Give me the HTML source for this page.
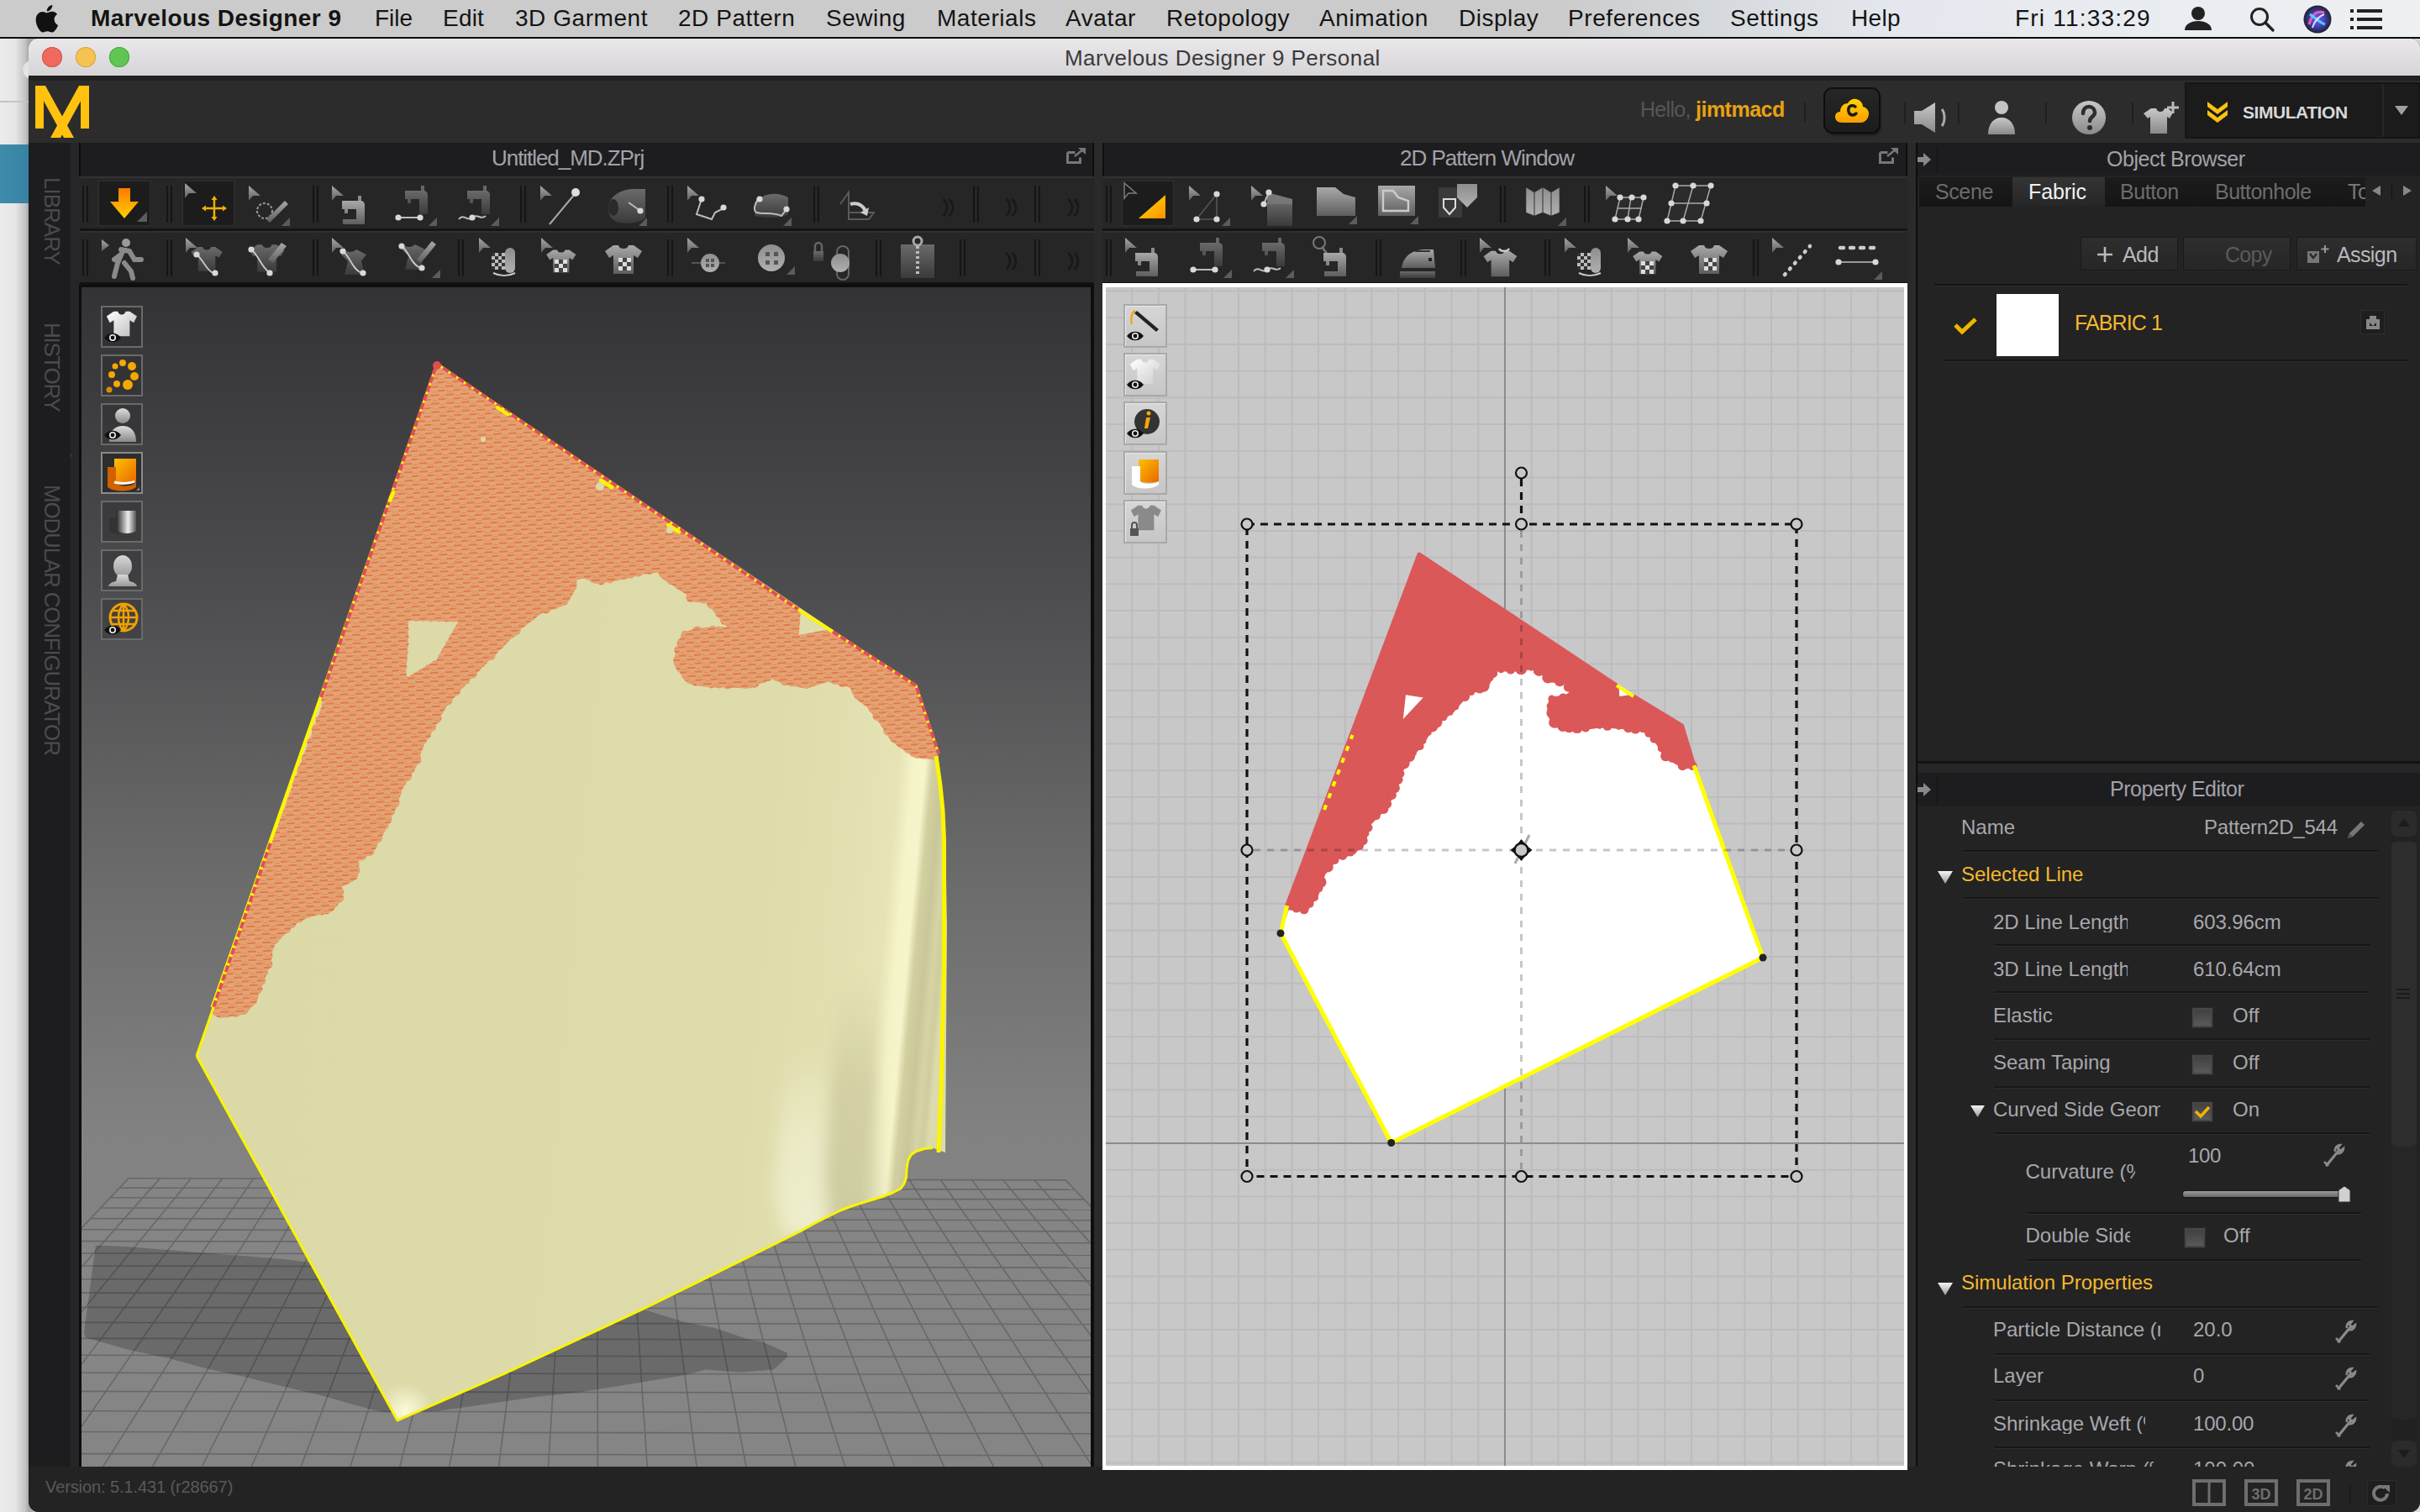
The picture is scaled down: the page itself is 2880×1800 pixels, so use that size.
<!DOCTYPE html>
<html><head><meta charset="utf-8">
<style>
*{box-sizing:border-box;margin:0;padding:0}
html,body{width:2880px;height:1800px;overflow:hidden}
body{position:relative;background:#d8d8d8;font-family:"Liberation Sans",sans-serif}
.a{position:absolute}
.t{position:absolute;white-space:nowrap;line-height:1}
svg{position:absolute;overflow:visible}
</style></head><body>

<div class="a" style="left:0px;top:46px;width:40px;height:1754px;background:linear-gradient(90deg,#ececec 0,#e6e6e6 18px,#c4c4c4 30px,#a8a8a8 34px);"></div>
<div class="a" style="left:0px;top:172px;width:34px;height:70px;background:linear-gradient(90deg,#3d8cab,#3782a2);"></div>
<div class="a" style="left:0px;top:120px;width:34px;height:2px;background:#c4c4c4;"></div>
<div class="a" style="left:26px;top:72px;width:22px;height:22px;border-radius:50%;border:1px solid #c8c8c8;background:#e4e4e4"></div>
<div class="a" style="left:0px;top:0px;width:2880px;height:44px;background:linear-gradient(90deg,#cbcbcb 0,#cbcbcb 1850px,#d6dade 2050px,#e4e8ee 2250px,#eef0f3 2880px);"></div>
<div class="a" style="left:0px;top:44px;width:2880px;height:2px;background:#0c0c0c;"></div>
<svg style="left:40px;top:5px" width="30" height="34" viewBox="0 0 30 34">
<path d="M24.6 18.1c0-4.1 3.4-6 3.5-6.1-1.9-2.8-4.9-3.2-5.9-3.2-2.5-.3-4.9 1.5-6.2 1.5-1.3 0-3.2-1.4-5.3-1.4C8 8.9 5.4 10.5 4 13c-2.9 5-.7 12.4 2.1 16.4 1.4 2 3 4.2 5.1 4.1 2.1-.1 2.8-1.3 5.3-1.3s3.1 1.3 5.3 1.3c2.2 0 3.6-2 5-4 1.6-2.3 2.2-4.5 2.2-4.6-.1 0-4.3-1.7-4.4-6.8zM20.6 6.1c1.1-1.4 1.9-3.3 1.7-5.1-1.6.1-3.6 1.1-4.8 2.5-1 1.2-2 3.1-1.7 5 1.8.1 3.7-1 4.8-2.4z" fill="#111"/></svg>
<div class="t" style="left:108.0px;top:8.2px;font-size:28px;color:#141414;font-weight:700;letter-spacing:0.45px;">Marvelous Designer 9</div>
<div class="t" style="left:446.0px;top:8.2px;font-size:28px;color:#141414;">File</div>
<div class="t" style="left:527.0px;top:8.2px;font-size:28px;color:#141414;letter-spacing:0.2px;">Edit</div>
<div class="t" style="left:613.0px;top:8.2px;font-size:28px;color:#141414;letter-spacing:0.55px;">3D Garment</div>
<div class="t" style="left:807.0px;top:8.2px;font-size:28px;color:#141414;letter-spacing:0.55px;">2D Pattern</div>
<div class="t" style="left:983.0px;top:8.2px;font-size:28px;color:#141414;letter-spacing:0.5px;">Sewing</div>
<div class="t" style="left:1115.0px;top:8.2px;font-size:28px;color:#141414;letter-spacing:0.55px;">Materials</div>
<div class="t" style="left:1268.0px;top:8.2px;font-size:28px;color:#141414;letter-spacing:0.6px;">Avatar</div>
<div class="t" style="left:1388.0px;top:8.2px;font-size:28px;color:#141414;letter-spacing:0.55px;">Retopology</div>
<div class="t" style="left:1570.0px;top:8.2px;font-size:28px;color:#141414;letter-spacing:0.6px;">Animation</div>
<div class="t" style="left:1736.0px;top:8.2px;font-size:28px;color:#141414;letter-spacing:0.5px;">Display</div>
<div class="t" style="left:1866.0px;top:8.2px;font-size:28px;color:#141414;letter-spacing:0.6px;">Preferences</div>
<div class="t" style="left:2059.0px;top:8.2px;font-size:28px;color:#141414;letter-spacing:0.55px;">Settings</div>
<div class="t" style="left:2203.0px;top:8.2px;font-size:28px;color:#141414;letter-spacing:0.3px;">Help</div>
<div class="t" style="left:2398.0px;top:8.2px;font-size:28px;color:#141414;letter-spacing:1.2px;">Fri 11:33:29</div>
<svg style="left:2598px;top:6px" width="40" height="32" viewBox="0 0 40 32">
<circle cx="18" cy="10" r="8" fill="#222"/><path d="M2 30c0-7 7-11 16-11s16 4 16 11z" fill="#222"/></svg>
<svg style="left:2676px;top:8px" width="34" height="32" viewBox="0 0 34 32">
<circle cx="13" cy="12" r="9.5" fill="none" stroke="#222" stroke-width="3"/><path d="M20 19l9 9" stroke="#222" stroke-width="3.4" stroke-linecap="round"/></svg>
<svg style="left:2740px;top:5px" width="36" height="36" viewBox="0 0 36 36">
<defs><radialGradient id="siri" cx="50%" cy="50%" r="50%"><stop offset="0" stop-color="#7a5cff"/><stop offset=".6" stop-color="#3b3ba8"/><stop offset=".85" stop-color="#2a2a5a"/><stop offset="1" stop-color="#222"/></radialGradient></defs>
<circle cx="18" cy="18" r="16.5" fill="url(#siri)"/>
<path d="M8 24C12 10 18 8 26 10" stroke="#ff5fb0" stroke-width="3" fill="none" opacity=".9"/>
<path d="M9 12c6 4 12 10 18 12" stroke="#4fd8ff" stroke-width="3" fill="none" opacity=".9"/>
<path d="M12 28c2-8 8-14 14-16" stroke="#ffffff" stroke-width="2" fill="none" opacity=".8"/></svg>
<svg style="left:2797px;top:10px" width="40" height="26" viewBox="0 0 40 26">
<g fill="#222"><rect x="0" y="1" width="4" height="4"/><rect x="8" y="1" width="30" height="4"/><rect x="0" y="11" width="4" height="4"/><rect x="8" y="11" width="30" height="4"/><rect x="0" y="21" width="4" height="4"/><rect x="8" y="21" width="30" height="4"/></g></svg>
<div class="a" style="left:34px;top:46px;width:2846px;height:1754px;background:#232323;border-radius:11px 11px 12px 12px;overflow:hidden">
<div class="a" style="left:0;top:0;width:2846px;height:44px;background:linear-gradient(#eae8eb,#d6d4d7)"></div>
</div>
<div class="a" style="left:50px;top:56px;width:24px;height:24px;border-radius:50%;background:#ee6a5f;box-shadow:inset 0 0 0 1px #d65548"></div>
<div class="a" style="left:90px;top:56px;width:24px;height:24px;border-radius:50%;background:#f6c251;box-shadow:inset 0 0 0 1px #dca23d"></div>
<div class="a" style="left:130px;top:56px;width:24px;height:24px;border-radius:50%;background:#61c554;box-shadow:inset 0 0 0 1px #4aa83e"></div>
<div class="t" style="left:1267.0px;top:55.9px;font-size:26px;color:#3a3a3a;letter-spacing:0.45px;">Marvelous Designer 9 Personal</div>
<div class="a" style="left:34px;top:90px;width:2846px;height:6px;background:#212121;"></div>
<div class="a" style="left:34px;top:96px;width:2846px;height:74px;background:#2c2c2c;"></div>
<svg style="left:0;top:0" width="120" height="170" viewBox="0 0 120 170">
<g fill="#ffc20e"><rect x="42" y="102" width="10" height="51"/><rect x="96" y="102" width="10" height="51"/>
<polygon points="42,102 54,102 88,164 76,164"/><polygon points="94,102 106,102 72,164 60,164"/></g></svg>
<div class="t" style="left:1952.0px;top:117.8px;font-size:25px;color:#55565a;letter-spacing:-0.7px;">Hello,</div>
<div class="t" style="left:2018.0px;top:117.8px;font-size:25px;color:#e9a112;font-weight:700;letter-spacing:-0.5px;">jimtmacd</div>
<div class="a" style="left:2147px;top:122px;width:2px;height:23px;background:#1e1e1e;"></div>
<div class="a" style="left:2172px;top:106px;width:64px;height:51px;border-radius:9px;background:linear-gradient(#262626,#1c1c1c);box-shadow:0 0 0 2px #0d0d0d, 2px 4px 3px rgba(0,0,0,.5)"></div>
<svg style="left:2183px;top:114px" width="42" height="34" viewBox="0 0 42 34">
<defs><linearGradient id="cg" x1="0" y1="0" x2="0" y2="1"><stop offset="0" stop-color="#ffd400"/><stop offset="1" stop-color="#ff9c00"/></linearGradient></defs>
<path d="M9 32c-5 0-8-3-8-7 0-4 3-6 6-6 0-6 4-10 9-10 2-4 6-6 10-5 5 1 8 5 8 9 4 1 7 4 7 8 0 6-4 11-10 11z" fill="url(#cg)"/>
<path d="M25 13c-2-2-7-2-8 2s1 8 5 8c2 0 3-1 4-2" fill="none" stroke="#1a1a1a" stroke-width="3.5" stroke-linecap="round"/></svg>
<div class="a" style="left:2266px;top:122px;width:2px;height:25px;background:#1f1f1f;"></div>
<div class="a" style="left:2330px;top:122px;width:2px;height:25px;background:#1f1f1f;"></div>
<div class="a" style="left:2434px;top:122px;width:2px;height:25px;background:#1f1f1f;"></div>
<div class="a" style="left:2537px;top:122px;width:2px;height:25px;background:#1f1f1f;"></div>
<svg style="left:2277px;top:120px" width="44" height="40" viewBox="0 0 44 40">
<defs><linearGradient id="gg" x1="0" y1="0" x2="0" y2="1"><stop offset="0" stop-color="#c8c8c8"/><stop offset="1" stop-color="#8a8a8a"/></linearGradient></defs>
<path d="M1 12h9l16-10v36L10 28H1z" fill="url(#gg)"/><path d="M34 10c4 5 4 15 0 20" stroke="#aaa" stroke-width="3" fill="none"/></svg>
<svg style="left:2365px;top:119px" width="34" height="42" viewBox="0 0 34 42">
<circle cx="17" cy="9" r="8" fill="#c4c4c4"/><path d="M1 41c0-12 6-20 16-20s16 8 16 20z" fill="url(#gg)"/></svg>
<svg style="left:2465px;top:119px" width="42" height="42" viewBox="0 0 42 42">
<circle cx="21" cy="21" r="20" fill="url(#gg)"/><path d="M14 16c0-5 3-8 7-8s7 3 7 7c0 5-6 5-6 10" stroke="#2c2c2c" stroke-width="4.5" fill="none" stroke-linecap="round"/><circle cx="22" cy="33" r="3" fill="#2c2c2c"/></svg>
<svg style="left:2549px;top:121px" width="44" height="40" viewBox="0 0 44 40">
<path d="M2 14l9-6h6c1 3 3 4 5 4s4-1 5-4h4l6 5-4 7-3-2v20H10V18l-3 2z" fill="url(#gg)"/><path d="M37 0v14M30 7h14" stroke="#bbb" stroke-width="3"/></svg>
<div class="a" style="left:2600px;top:98px;width:280px;height:67px;background:#1b1b1b;box-shadow:inset 0 0 0 2px #151515"></div>
<div class="a" style="left:2835px;top:100px;width:2px;height:63px;background:#262626;"></div>
<svg style="left:2625px;top:119px" width="28" height="28" viewBox="0 0 28 28">
<path d="M2 2l12 9 12-9v6L14 17 2 8zM2 12l12 9 12-9v6L14 27 2 18z" fill="#ffc20e"/></svg>
<div class="t" style="left:2669.0px;top:122.7px;font-size:21px;color:#d8d8d8;font-weight:700;letter-spacing:-0.45px;">SIMULATION</div>
<svg style="left:2850px;top:126px" width="16" height="12" viewBox="0 0 16 12"><path d="M0 0h16L8 11z" fill="#a0a0a0"/></svg>
<div class="a" style="left:34px;top:170px;width:50px;height:1576px;background:#1d1d1f;"></div>
<div class="a" style="left:84px;top:170px;width:11px;height:1576px;background:#262628;"></div>
<div class="t" style="left:52.5px;top:211px;font-size:26px;color:#4b4b4d;letter-spacing:-1.0px;transform-origin:0 0;transform:rotate(90deg) translate(0,-22.1px)">LIBRARY</div>
<div class="t" style="left:52.5px;top:384px;font-size:26px;color:#4b4b4d;letter-spacing:-1.3px;transform-origin:0 0;transform:rotate(90deg) translate(0,-22.1px)">HISTORY</div>
<div class="t" style="left:52.5px;top:577px;font-size:26px;color:#4b4b4d;letter-spacing:-1.2px;transform-origin:0 0;transform:rotate(90deg) translate(0,-22.1px)">MODULAR CONFIGURATOR</div>
<div class="a" style="left:84px;top:540px;width:1px;height:4px;background:#444;"></div>
<div class="a" style="left:95px;top:170px;width:1207px;height:1576px;background:#2a2a2a;"></div>
<div class="a" style="left:95px;top:170px;width:1205px;height:40px;background:#1d1d1f;"></div>
<div class="a" style="left:1300px;top:170px;width:2px;height:40px;background:#0e0e0e;"></div>
<div class="a" style="left:95px;top:210px;width:1205px;height:2px;background:#333335;"></div>
<div class="a" style="left:95px;top:212px;width:1207px;height:60px;background:#262626;"></div>
<div class="a" style="left:95px;top:272px;width:1207px;height:3px;background:#141414;"></div>
<div class="a" style="left:95px;top:275px;width:1207px;height:2px;background:#303030;"></div>
<div class="a" style="left:95px;top:277px;width:1207px;height:59px;background:#262626;"></div>
<div class="a" style="left:95px;top:336px;width:1207px;height:4px;background:#121212;"></div>
<div class="a" style="left:94px;top:338px;width:1208px;height:1408px;background:#0e0e0e;"></div>
<div class="a" style="left:94px;top:170px;width:2px;height:40px;background:#0b0b0b;"></div>
<div class="t" style="left:585.0px;top:174.9px;font-size:26px;color:#a2a2aa;letter-spacing:-1.05px;">Untitled_MD.ZPrj</div>
<svg style="left:1269px;top:175px" width="24" height="20" viewBox="0 0 24 20">
<path d="M1.5 6.5h9M1.5 6.5v12h15v-6" stroke="#777" stroke-width="3" fill="none"/><path d="M10 11l11-9" stroke="#777" stroke-width="2.5"/><path d="M14 1h9v8z" fill="#777"/></svg>
<div class="a" style="left:1302px;top:170px;width:10px;height:1580px;background:#2a2a2a;"></div>
<div class="a" style="left:1312px;top:170px;width:958px;height:40px;background:#1d1d1f;"></div>
<div class="a" style="left:1312px;top:170px;width:2px;height:40px;background:#0e0e0e;"></div>
<div class="a" style="left:1312px;top:210px;width:958px;height:2px;background:#333335;"></div>
<div class="a" style="left:1312px;top:212px;width:958px;height:60px;background:#262626;"></div>
<div class="a" style="left:1312px;top:272px;width:958px;height:3px;background:#141414;"></div>
<div class="a" style="left:1312px;top:275px;width:958px;height:2px;background:#303030;"></div>
<div class="a" style="left:1312px;top:277px;width:958px;height:59px;background:#262626;"></div>
<div class="a" style="left:1312px;top:336px;width:958px;height:2px;background:#121212;"></div>
<div class="t" style="left:1666.0px;top:174.9px;font-size:26px;color:#a2a2aa;letter-spacing:-1.0px;">2D Pattern Window</div>
<svg style="left:2236px;top:175px" width="24" height="20" viewBox="0 0 24 20">
<path d="M1.5 6.5h9M1.5 6.5v12h15v-6" stroke="#777" stroke-width="3" fill="none"/><path d="M10 11l11-9" stroke="#777" stroke-width="2.5"/><path d="M14 1h9v8z" fill="#777"/></svg>
<div class="a" style="left:2270px;top:170px;width:12px;height:1580px;background:#2a2a2a;"></div>
<div class="a" style="left:2268px;top:170px;width:2px;height:40px;background:#0e0e0e;"></div>
<div class="a" style="left:2282px;top:170px;width:598px;height:39px;background:#1d1d1f;"></div>
<svg style="left:2282px;top:182px" width="16" height="16" viewBox="0 0 16 16"><path d="M0 5h7V0l9 8-9 8v-5H0z" fill="#8a8a8a"/></svg>
<div class="a" style="left:2305px;top:174px;width:1px;height:32px;background:#111;"></div>
<div class="t" style="left:2507.0px;top:176.8px;font-size:25px;color:#a2a2aa;letter-spacing:-0.45px;">Object Browser</div>
<div class="a" style="left:2282px;top:209px;width:598px;height:700px;background:#232323;"></div>
<div class="a" style="left:2284px;top:211px;width:590px;height:35px;background:#181818;"></div>
<div class="a" style="left:2284px;top:211px;width:110px;height:35px;background:linear-gradient(#1c1c1c,#151515);"></div>
<div class="a" style="left:2395px;top:211px;width:110px;height:35px;background:linear-gradient(#343434,#262626);"></div>
<div class="a" style="left:2506px;top:211px;width:110px;height:35px;background:linear-gradient(#1c1c1c,#151515);"></div>
<div class="a" style="left:2617px;top:211px;width:157px;height:35px;background:linear-gradient(#1c1c1c,#151515);"></div>
<div class="a" style="left:2775px;top:211px;width:40px;height:35px;background:linear-gradient(#1c1c1c,#151515);"></div>
<div class="t" style="left:2303.0px;top:215.8px;font-size:25px;color:#6c6c70;letter-spacing:-0.4px;">Scene</div>
<div class="t" style="left:2414.0px;top:215.8px;font-size:25px;color:#f2f2f2;letter-spacing:-0.1px;">Fabric</div>
<div class="t" style="left:2523.0px;top:215.8px;font-size:25px;color:#6c6c70;letter-spacing:-0.4px;">Button</div>
<div class="t" style="left:2636.0px;top:215.8px;font-size:25px;color:#6c6c70;letter-spacing:-0.5px;">Buttonhole</div>
<div class="t" style="left:2794.0px;top:215.8px;font-size:25px;color:#77777b;letter-spacing:-0.5px;width:26px;overflow:hidden">To</div>
<div class="a" style="left:2815px;top:211px;width:65px;height:35px;background:#232323;"></div>
<svg style="left:2823px;top:220px" width="50" height="16" viewBox="0 0 50 16"><path d="M0 7l10-6v12z" fill="#888"/><path d="M47 7l-10-6v12z" fill="#888"/><rect x="23" y="0" width="1" height="16" fill="#111"/></svg>
<div class="a" style="left:2476px;top:282px;width:116px;height:40px;background:linear-gradient(#2e2e2e,#262626);box-shadow:inset 0 0 0 1px #1a1a1a"></div>
<div class="a" style="left:2598px;top:282px;width:128px;height:40px;background:linear-gradient(#2e2e2e,#262626);box-shadow:inset 0 0 0 1px #1a1a1a"></div>
<div class="a" style="left:2733px;top:282px;width:143px;height:40px;background:linear-gradient(#2e2e2e,#262626);box-shadow:inset 0 0 0 1px #1a1a1a"></div>
<svg style="left:2495px;top:293px" width="20" height="20" viewBox="0 0 20 20"><path d="M10 1v18M1 10h18" stroke="#b8b8b8" stroke-width="2.6"/></svg>
<div class="t" style="left:2526.0px;top:290.8px;font-size:25px;color:#b8b8bc;letter-spacing:-0.6px;">Add</div>
<div class="t" style="left:2648.0px;top:290.8px;font-size:25px;color:#5a5a5e;letter-spacing:-0.7px;">Copy</div>
<svg style="left:2745px;top:290px" width="28" height="26" viewBox="0 0 28 26"><rect x="1" y="9" width="14" height="14" fill="#777"/><path d="M4 12l4 5 4-5" stroke="#2a2a2a" stroke-width="2.5" fill="none"/><path d="M22 2v9M17.5 6.5h9" stroke="#999" stroke-width="2"/></svg>
<div class="t" style="left:2781.0px;top:290.8px;font-size:25px;color:#b8b8bc;letter-spacing:-0.6px;">Assign</div>
<div class="a" style="left:2302px;top:338px;width:563px;height:2px;background:#151515;"></div>
<div class="a" style="left:2302px;top:340px;width:563px;height:1px;background:#2e2e2e;"></div>
<svg style="left:2325px;top:377px" width="28" height="22" viewBox="0 0 28 22"><path d="M2 10l8 8L26 3" stroke="#f0b400" stroke-width="5" fill="none"/></svg>
<div class="a" style="left:2376px;top:350px;width:74px;height:74px;background:#ffffff;"></div>
<div class="t" style="left:2469.0px;top:371.8px;font-size:25px;color:#f5b82e;letter-spacing:-0.9px;">FABRIC 1</div>
<div class="a" style="left:2809px;top:369px;width:29px;height:29px;background:#1e1e1e;box-shadow:inset 0 0 0 1px #2e2e2e"></div>
<svg style="left:2814px;top:374px" width="20" height="20" viewBox="0 0 20 20"><path d="M2 6h4v8h8V6h4v12H2z" fill="#888"/><path d="M6 2h8v5h3l-7 7-7-7h3z" fill="#888"/></svg>
<div class="a" style="left:2312px;top:428px;width:553px;height:2px;background:#161616;"></div>
<div class="a" style="left:2312px;top:430px;width:553px;height:1px;background:#2c2c2c;"></div>
<div class="a" style="left:2282px;top:906px;width:598px;height:3px;background:#121212;"></div>
<div class="a" style="left:2282px;top:909px;width:598px;height:11px;background:#262626;"></div>
<div class="a" style="left:2282px;top:920px;width:598px;height:40px;background:#1d1d1f;"></div>
<svg style="left:2282px;top:932px" width="16" height="16" viewBox="0 0 16 16"><path d="M0 5h7V0l9 8-9 8v-5H0z" fill="#8a8a8a"/></svg>
<div class="a" style="left:2305px;top:925px;width:1px;height:32px;background:#111;"></div>
<div class="t" style="left:2511.0px;top:926.8px;font-size:25px;color:#a2a2aa;letter-spacing:-0.5px;">Property Editor</div>
<div class="a" style="left:2282px;top:960px;width:598px;height:789px;background:#232323;"></div>
<div class="a" style="left:2280px;top:170px;width:2px;height:1579px;background:#0e0e0e;"></div>
<div class="t" style="left:2334px;top:972.6px;font-size:24px;color:#a7a7ad;width:120px;overflow:hidden;letter-spacing:0px">Name</div>
<div class="t" style="left:2623.0px;top:972.6px;font-size:24px;color:#a7a7ad;letter-spacing:-0.2px;">Pattern2D_544</div>
<svg style="left:2791px;top:975px" width="26" height="26" viewBox="0 0 26 26"><path d="M3 23l2-6L19 3l4 4L9 21z" fill="#777"/><path d="M3 23l2-6 4 4z" fill="#555"/></svg>
<div class="a" style="left:2336px;top:1012px;width:494px;height:2px;background:#161616;"></div>
<div class="a" style="left:2336px;top:1014px;width:494px;height:1px;background:#2d2d2d;"></div>
<svg style="left:2306px;top:1036px" width="18" height="16" viewBox="0 0 18 16"><defs><linearGradient id="tg" x1="0" y1="0" x2="0" y2="1"><stop offset="0" stop-color="#f4f4f4"/><stop offset="1" stop-color="#9a9a9a"/></linearGradient></defs><path d="M0 1h18L9 16z" fill="url(#tg)"/></svg>
<div class="t" style="left:2334.0px;top:1028.6px;font-size:24px;color:#f5b82e;">Selected Line</div>
<div class="a" style="left:2336px;top:1068px;width:494px;height:2px;background:#161616;"></div>
<div class="a" style="left:2336px;top:1070px;width:494px;height:1px;background:#2d2d2d;"></div>
<div class="t" style="left:2372px;top:1085.6px;font-size:24px;color:#a7a7ad;width:160px;overflow:hidden;letter-spacing:0px">2D Line Length</div>
<div class="t" style="left:2610.0px;top:1085.6px;font-size:24px;color:#a7a7ad;letter-spacing:-0.1px;">603.96cm</div>
<div class="a" style="left:2374px;top:1124px;width:446px;height:2px;background:#161616;"></div>
<div class="a" style="left:2374px;top:1126px;width:446px;height:1px;background:#2d2d2d;"></div>
<div class="t" style="left:2372px;top:1141.6px;font-size:24px;color:#a7a7ad;width:160px;overflow:hidden;letter-spacing:0px">3D Line Length</div>
<div class="t" style="left:2610.0px;top:1141.6px;font-size:24px;color:#a7a7ad;letter-spacing:-0.1px;">610.64cm</div>
<div class="a" style="left:2374px;top:1180px;width:446px;height:2px;background:#161616;"></div>
<div class="a" style="left:2374px;top:1182px;width:446px;height:1px;background:#2d2d2d;"></div>
<div class="t" style="left:2372px;top:1196.6px;font-size:24px;color:#a7a7ad;width:190px;overflow:hidden;letter-spacing:0px">Elastic</div>
<div class="a" style="left:2609px;top:1200px;width:24px;height:23px;background:linear-gradient(#3e3e3e,#5c5c5c);box-shadow:inset 0 0 0 2px #474747, 0 0 0 1px #2a2a2a"></div>
<div class="t" style="left:2657.0px;top:1196.6px;font-size:24px;color:#a7a7ad;">Off</div>
<div class="a" style="left:2374px;top:1236px;width:446px;height:2px;background:#161616;"></div>
<div class="a" style="left:2374px;top:1238px;width:446px;height:1px;background:#2d2d2d;"></div>
<div class="t" style="left:2372px;top:1252.6px;font-size:24px;color:#a7a7ad;width:190px;overflow:hidden;letter-spacing:0px">Seam Taping</div>
<div class="a" style="left:2609px;top:1256px;width:24px;height:23px;background:linear-gradient(#3e3e3e,#5c5c5c);box-shadow:inset 0 0 0 2px #474747, 0 0 0 1px #2a2a2a"></div>
<div class="t" style="left:2657.0px;top:1252.6px;font-size:24px;color:#a7a7ad;">Off</div>
<div class="a" style="left:2374px;top:1293px;width:446px;height:2px;background:#161616;"></div>
<div class="a" style="left:2374px;top:1295px;width:446px;height:1px;background:#2d2d2d;"></div>
<svg style="left:2345px;top:1315px" width="17" height="15" viewBox="0 0 18 16"><defs><linearGradient id="tg" x1="0" y1="0" x2="0" y2="1"><stop offset="0" stop-color="#f4f4f4"/><stop offset="1" stop-color="#9a9a9a"/></linearGradient></defs><path d="M0 1h18L9 16z" fill="url(#tg)"/></svg>
<div class="t" style="left:2372px;top:1308.6px;font-size:24px;color:#a7a7ad;width:199px;overflow:hidden;letter-spacing:0px">Curved Side Geometry</div>
<div class="a" style="left:2609px;top:1312px;width:24px;height:23px;background:linear-gradient(#3e3e3e,#5c5c5c);box-shadow:inset 0 0 0 2px #474747, 0 0 0 1px #2a2a2a"></div>
<svg style="left:2611px;top:1316px" width="20" height="16" viewBox="0 0 20 16"><path d="M2 7l6 6L18 2" stroke="#f0b400" stroke-width="3.6" fill="none"/></svg>
<div class="t" style="left:2657.0px;top:1308.6px;font-size:24px;color:#a7a7ad;">On</div>
<div class="a" style="left:2374px;top:1348px;width:446px;height:2px;background:#161616;"></div>
<div class="a" style="left:2374px;top:1350px;width:446px;height:1px;background:#2d2d2d;"></div>
<div class="t" style="left:2410.5px;top:1382.6px;font-size:24px;color:#a7a7ad;width:130px;overflow:hidden;letter-spacing:0px">Curvature (%)</div>
<div class="t" style="left:2604.0px;top:1363.6px;font-size:24px;color:#a7a7ad;letter-spacing:-0.4px;">100</div>
<svg style="left:2765px;top:1361px" width="28" height="28" viewBox="0 0 28 28"><path d="M4 26L18 9" stroke="#8a8a8a" stroke-width="3.2" stroke-linecap="round"/><path d="M14 10c-1-4 2-8 6-8l-3 4 3 3 4-3c0 4-4 7-8 6" fill="none" stroke="#8a8a8a" stroke-width="2.6"/><path d="M1 22l5 5" stroke="#8a8a8a" stroke-width="2.6"/></svg>
<div class="a" style="left:2598px;top:1418px;width:190px;height:7px;background:linear-gradient(#9a9a9a,#6a6a6a);border-radius:3px;box-shadow:0 0 0 1px #1a1a1a"></div>
<svg style="left:2782px;top:1411px" width="16" height="21" viewBox="0 0 16 21"><path d="M1 6l7-5 7 5v14H1z" fill="#d0d0d0" stroke="#333" stroke-width="1"/></svg>
<div class="a" style="left:2412px;top:1443px;width:398px;height:2px;background:#161616;"></div>
<div class="a" style="left:2412px;top:1445px;width:398px;height:1px;background:#2d2d2d;"></div>
<div class="t" style="left:2410.5px;top:1458.6px;font-size:24px;color:#a7a7ad;width:124px;overflow:hidden;letter-spacing:0px">Double Side</div>
<div class="a" style="left:2600px;top:1462px;width:24px;height:23px;background:linear-gradient(#3e3e3e,#5c5c5c);box-shadow:inset 0 0 0 2px #474747, 0 0 0 1px #2a2a2a"></div>
<div class="t" style="left:2646.0px;top:1458.6px;font-size:24px;color:#a7a7ad;">Off</div>
<div class="a" style="left:2412px;top:1499px;width:398px;height:2px;background:#161616;"></div>
<div class="a" style="left:2412px;top:1501px;width:398px;height:1px;background:#2d2d2d;"></div>
<svg style="left:2306px;top:1526px" width="18" height="16" viewBox="0 0 18 16"><defs><linearGradient id="tg" x1="0" y1="0" x2="0" y2="1"><stop offset="0" stop-color="#f4f4f4"/><stop offset="1" stop-color="#9a9a9a"/></linearGradient></defs><path d="M0 1h18L9 16z" fill="url(#tg)"/></svg>
<div class="t" style="left:2334.0px;top:1514.6px;font-size:24px;color:#f5b82e;">Simulation Properties</div>
<div class="a" style="left:2336px;top:1555px;width:494px;height:2px;background:#161616;"></div>
<div class="a" style="left:2336px;top:1557px;width:494px;height:1px;background:#2d2d2d;"></div>
<div class="t" style="left:2372px;top:1570.6px;font-size:24px;color:#a7a7ad;width:199px;overflow:hidden;letter-spacing:0px">Particle Distance (mm)</div>
<div class="t" style="left:2610.0px;top:1570.6px;font-size:24px;color:#a7a7ad;">20.0</div>
<svg style="left:2779px;top:1571px" width="28" height="28" viewBox="0 0 28 28"><path d="M4 26L18 9" stroke="#8a8a8a" stroke-width="3.2" stroke-linecap="round"/><path d="M14 10c-1-4 2-8 6-8l-3 4 3 3 4-3c0 4-4 7-8 6" fill="none" stroke="#8a8a8a" stroke-width="2.6"/><path d="M1 22l5 5" stroke="#8a8a8a" stroke-width="2.6"/></svg>
<div class="a" style="left:2374px;top:1611px;width:446px;height:2px;background:#161616;"></div>
<div class="a" style="left:2374px;top:1613px;width:446px;height:1px;background:#2d2d2d;"></div>
<div class="t" style="left:2372px;top:1625.6px;font-size:24px;color:#a7a7ad;width:190px;overflow:hidden;letter-spacing:0px">Layer</div>
<div class="t" style="left:2610.0px;top:1625.6px;font-size:24px;color:#a7a7ad;">0</div>
<svg style="left:2779px;top:1627px" width="28" height="28" viewBox="0 0 28 28"><path d="M4 26L18 9" stroke="#8a8a8a" stroke-width="3.2" stroke-linecap="round"/><path d="M14 10c-1-4 2-8 6-8l-3 4 3 3 4-3c0 4-4 7-8 6" fill="none" stroke="#8a8a8a" stroke-width="2.6"/><path d="M1 22l5 5" stroke="#8a8a8a" stroke-width="2.6"/></svg>
<div class="a" style="left:2374px;top:1666px;width:446px;height:2px;background:#161616;"></div>
<div class="a" style="left:2374px;top:1668px;width:446px;height:1px;background:#2d2d2d;"></div>
<div class="t" style="left:2372px;top:1682.6px;font-size:24px;color:#a7a7ad;width:181px;overflow:hidden;letter-spacing:0px">Shrinkage Weft (%)</div>
<div class="t" style="left:2610.0px;top:1682.6px;font-size:24px;color:#a7a7ad;letter-spacing:-0.2px;">100.00</div>
<svg style="left:2779px;top:1683px" width="28" height="28" viewBox="0 0 28 28"><path d="M4 26L18 9" stroke="#8a8a8a" stroke-width="3.2" stroke-linecap="round"/><path d="M14 10c-1-4 2-8 6-8l-3 4 3 3 4-3c0 4-4 7-8 6" fill="none" stroke="#8a8a8a" stroke-width="2.6"/><path d="M1 22l5 5" stroke="#8a8a8a" stroke-width="2.6"/></svg>
<div class="a" style="left:2374px;top:1722px;width:446px;height:2px;background:#161616;"></div>
<div class="a" style="left:2374px;top:1724px;width:446px;height:1px;background:#2d2d2d;"></div>
<div class="a" style="left:2282px;top:1723px;width:560px;height:25px;overflow:hidden">
<div class="t" style="left:90px;top:13.6px;font-size:24px;color:#a7a7ad;width:191px;overflow:hidden">Shrinkage Warp (%)</div>
<div class="t" style="left:328px;top:13.6px;font-size:24px;color:#a7a7ad">100.00</div>
<svg style="left:497px;top:15px" width="28" height="28" viewBox="0 0 28 28"><path d="M4 26L18 9" stroke="#8a8a8a" stroke-width="3.2" stroke-linecap="round"/><path d="M14 10c-1-4 2-8 6-8l-3 4 3 3 4-3c0 4-4 7-8 6" fill="none" stroke="#8a8a8a" stroke-width="2.6"/></svg>
</div>
<div class="a" style="left:2846px;top:964px;width:30px;height:782px;background:#212121;"></div>
<div class="a" style="left:2846px;top:965px;width:30px;height:31px;background:#2b2b2b;border-radius:6px"></div>
<svg style="left:2854px;top:974px" width="14" height="10" viewBox="0 0 14 10"><path d="M0 10L7 0l7 10z" fill="#1c1c1c"/></svg>
<div class="a" style="left:2846px;top:1002px;width:30px;height:363px;background:#2d2d2d;border-radius:5px"></div>
<div class="a" style="left:2852px;top:1177px;width:16px;height:2px;background:#1a1a1a;"></div>
<div class="a" style="left:2852px;top:1182px;width:16px;height:2px;background:#1a1a1a;"></div>
<div class="a" style="left:2852px;top:1187px;width:16px;height:2px;background:#1a1a1a;"></div>
<div class="a" style="left:2846px;top:1365px;width:30px;height:325px;background:#262626;border-radius:0 0 6px 6px"></div>
<div class="a" style="left:2846px;top:1715px;width:30px;height:31px;background:#2b2b2b;border-radius:6px"></div>
<svg style="left:2854px;top:1726px" width="14" height="10" viewBox="0 0 14 10"><path d="M0 0L7 10l7-10z" fill="#1c1c1c"/></svg>
<div class="a" style="left:2282px;top:1746px;width:598px;height:3px;background:#121212;"></div>
<div class="a" style="left:0px;top:1746px;width:40px;height:54px;background:linear-gradient(90deg,#ececec 0,#e6e6e6 18px,#c4c4c4 30px,#a8a8a8 34px);"></div>
<div class="a" style="left:34px;top:1746px;width:2846px;height:54px;background:#232323;border-radius:0 0 12px 12px"></div>
<div class="t" style="left:54.0px;top:1759.5px;font-size:20px;color:#59595d;letter-spacing:-0.1px;">Version: 5.1.431 (r28667)</div>
<svg style="left:2609px;top:1761px" width="40" height="32" viewBox="0 0 40 32"><rect x="2" y="2" width="36" height="28" fill="none" stroke="#6e6e6e" stroke-width="4"/><path d="M20 2v28" stroke="#6e6e6e" stroke-width="3"/></svg>
<svg style="left:2671px;top:1761px" width="40" height="32" viewBox="0 0 40 32"><rect x="2" y="2" width="36" height="28" fill="none" stroke="#6e6e6e" stroke-width="4"/><text x="20" y="24" font-family="Liberation Sans" font-weight="700" font-size="18" fill="#6e6e6e" text-anchor="middle">3D</text></svg>
<svg style="left:2733px;top:1761px" width="40" height="32" viewBox="0 0 40 32"><rect x="2" y="2" width="36" height="28" fill="none" stroke="#6e6e6e" stroke-width="4"/><text x="20" y="24" font-family="Liberation Sans" font-weight="700" font-size="18" fill="#6e6e6e" text-anchor="middle">2D</text></svg>
<div class="a" style="left:2796px;top:1766px;width:2px;height:24px;background:#1c1c1c;"></div>
<div class="a" style="left:2817px;top:1762px;width:35px;height:31px;background:#1e1e1e;box-shadow:inset 0 0 0 1px #2a2a2a"></div>
<svg style="left:2822px;top:1767px" width="24" height="22" viewBox="0 0 24 22"><path d="M19 11a8 8 0 1 1-3-6.5" stroke="#777" stroke-width="4" fill="none"/><path d="M12 1h10v9z" fill="#777"/></svg>
<svg style="left:95px;top:338px" width="1207" height="1408" viewBox="95 338 1207 1408">
<defs>
<linearGradient id="bg3" x1="0" y1="342" x2="0" y2="1746" gradientUnits="userSpaceOnUse">
<stop offset="0" stop-color="#333336"/><stop offset=".25" stop-color="#4c4c4e"/><stop offset=".5" stop-color="#6b6b6c"/><stop offset=".72" stop-color="#828282"/><stop offset="1" stop-color="#868686"/></linearGradient>
<linearGradient id="fab" x1="234" y1="1150" x2="1125" y2="1233" gradientUnits="userSpaceOnUse">
<stop offset="0" stop-color="#dbd9a7"/><stop offset=".741" stop-color="#dedcab"/><stop offset=".852" stop-color="#e2e0b0"/><stop offset=".905" stop-color="#e6e4b5"/><stop offset=".925" stop-color="#f5f3c8"/><stop offset=".94" stop-color="#f6f4ca"/><stop offset=".95" stop-color="#d2d0a0"/><stop offset=".964" stop-color="#c9c799"/><stop offset=".975" stop-color="#d6d4a5"/><stop offset=".984" stop-color="#cfcd9d"/><stop offset=".991" stop-color="#dddbab"/><stop offset="1" stop-color="#dddbab"/></linearGradient>
<radialGradient id="tip" cx="482" cy="1680" r="34" gradientUnits="userSpaceOnUse"><stop offset="0" stop-color="#fdfdd8" stop-opacity=".95"/><stop offset="1" stop-color="#fbfbe0" stop-opacity="0"/></radialGradient>
<pattern id="opat" width="18" height="10" patternUnits="userSpaceOnUse" patternTransform="rotate(-3)">
<rect width="18" height="10" fill="#e2a474"/><rect x="1" y="6" width="10" height="2" fill="#e6784a"/><rect x="10" y="1" width="8" height="2" fill="#e6784a"/><rect x="3" y="3" width="6" height="1" fill="#e48858"/><rect x="12" y="8" width="6" height="1" fill="#e48858"/><rect x="0" y="1" width="4" height="1" fill="#e48a5a"/></pattern>
<clipPath id="vp3"><rect x="97" y="342" width="1201" height="1404"/></clipPath>
<clipPath id="gclip"><polygon points="520.0,433.0 1091.0,817.0 1116.0,897.0 1121.0,940.0 1125.0,990.0 1127.0,1100.0 1125.0,1372.0 1110.0,1366.5 1100.0,1367.5 1090.0,1370.7 1084.0,1375.0 1080.5,1382.0 1079.0,1392.0 1078.5,1402.0 1076.0,1409.0 1072.0,1415.0 1062.0,1420.0 1049.0,1425.0 1032.0,1430.0 1016.0,1435.0 1000.0,1441.0 986.0,1448.0 970.0,1456.0 954.0,1465.0 924.0,1480.0 765.0,1558.5 600.0,1635.5 473.0,1691.0 234.0,1257.0"/></clipPath>
<filter id="blur8" x="-50%" y="-50%" width="200%" height="200%"><feGaussianBlur stdDeviation="9"/></filter>
<linearGradient id="dband" x1="0" y1="1160" x2="0" y2="1460" gradientUnits="userSpaceOnUse"><stop offset="0" stop-color="#a8a680" stop-opacity="0"/><stop offset=".45" stop-color="#a8a680" stop-opacity=".3"/><stop offset="1" stop-color="#a8a680" stop-opacity=".4"/></linearGradient>
<linearGradient id="lband" x1="0" y1="1250" x2="0" y2="1460" gradientUnits="userSpaceOnUse"><stop offset="0" stop-color="#fffff0" stop-opacity="0"/><stop offset=".5" stop-color="#fffff0" stop-opacity=".35"/><stop offset="1" stop-color="#fffff0" stop-opacity=".45"/></linearGradient>
</defs>
<g clip-path="url(#vp3)">
<rect x="95" y="338" width="1207" height="1408" fill="url(#bg3)"/>
<polygon points="153.0,1402.8 1268.0,1404.8 1598.3,1750.0 -175.6,1750.0" fill="#858585"/>
<g stroke="#686868" stroke-width="1.6"><line x1="153.0" y1="1402.82" x2="1268.0" y2="1404.83"/><line x1="142.3" y1="1414.08" x2="1278.8" y2="1416.12"/><line x1="131.2" y1="1425.78" x2="1289.9" y2="1427.86"/><line x1="119.6" y1="1437.95" x2="1301.6" y2="1440.07"/><line x1="107.6" y1="1450.61" x2="1313.7" y2="1452.78"/><line x1="95.0" y1="1463.81" x2="1326.3" y2="1466.02"/><line x1="81.9" y1="1477.56" x2="1339.4" y2="1479.83"/><line x1="68.3" y1="1491.92" x2="1353.2" y2="1494.23"/><line x1="54.0" y1="1506.91" x2="1367.5" y2="1509.28"/><line x1="39.1" y1="1522.59" x2="1382.5" y2="1525.01"/><line x1="23.5" y1="1538.99" x2="1398.2" y2="1541.47"/><line x1="7.2" y1="1556.18" x2="1414.6" y2="1558.72"/><line x1="-9.9" y1="1574.21" x2="1431.8" y2="1576.81"/><line x1="-27.9" y1="1593.14" x2="1449.9" y2="1595.80"/><line x1="-46.9" y1="1613.04" x2="1468.9" y2="1615.77"/><line x1="-66.8" y1="1634.00" x2="1489.0" y2="1636.80"/><line x1="-87.8" y1="1656.08" x2="1510.1" y2="1658.96"/><line x1="-109.9" y1="1679.40" x2="1532.4" y2="1682.35"/><line x1="-133.4" y1="1704.05" x2="1555.9" y2="1707.09"/><line x1="-158.2" y1="1730.15" x2="1580.9" y2="1733.28"/><line x1="-184.5" y1="1757.83" x2="1607.3" y2="1761.06"/><line x1="153.0" y1="1402.82" x2="-175.6" y2="1750"/><line x1="190.2" y1="1402.89" x2="-116.4" y2="1750"/><line x1="227.3" y1="1402.95" x2="-57.3" y2="1750"/><line x1="264.5" y1="1403.02" x2="1.8" y2="1750"/><line x1="301.7" y1="1403.09" x2="61.0" y2="1750"/><line x1="338.8" y1="1403.15" x2="120.1" y2="1750"/><line x1="376.0" y1="1403.22" x2="179.2" y2="1750"/><line x1="413.2" y1="1403.29" x2="238.4" y2="1750"/><line x1="450.3" y1="1403.36" x2="297.5" y2="1750"/><line x1="487.5" y1="1403.42" x2="356.6" y2="1750"/><line x1="524.7" y1="1403.49" x2="415.7" y2="1750"/><line x1="561.8" y1="1403.56" x2="474.9" y2="1750"/><line x1="599.0" y1="1403.62" x2="534.0" y2="1750"/><line x1="636.2" y1="1403.69" x2="593.1" y2="1750"/><line x1="673.3" y1="1403.76" x2="652.3" y2="1750"/><line x1="710.5" y1="1403.82" x2="711.4" y2="1750"/><line x1="747.7" y1="1403.89" x2="770.5" y2="1750"/><line x1="784.8" y1="1403.96" x2="829.6" y2="1750"/><line x1="822.0" y1="1404.02" x2="888.8" y2="1750"/><line x1="859.2" y1="1404.09" x2="947.9" y2="1750"/><line x1="896.3" y1="1404.16" x2="1007.0" y2="1750"/><line x1="933.5" y1="1404.23" x2="1066.2" y2="1750"/><line x1="970.7" y1="1404.29" x2="1125.3" y2="1750"/><line x1="1007.8" y1="1404.36" x2="1184.4" y2="1750"/><line x1="1045.0" y1="1404.43" x2="1243.6" y2="1750"/><line x1="1082.2" y1="1404.49" x2="1302.7" y2="1750"/><line x1="1119.3" y1="1404.56" x2="1361.8" y2="1750"/><line x1="1156.5" y1="1404.63" x2="1420.9" y2="1750"/><line x1="1193.7" y1="1404.69" x2="1480.1" y2="1750"/><line x1="1230.8" y1="1404.76" x2="1539.2" y2="1750"/><line x1="1268.0" y1="1404.83" x2="1598.3" y2="1750"/></g>
<polygon points="114,1482.4 149.5,1484 232,1490.7 285,1494.8 338,1499 370,1503 765,1558.5 815,1574 851,1581 889,1594 906,1597 937,1610.6 937,1615.5 920.7,1630.4 881,1633.7 839.7,1630.4 815,1637 765,1645.3 692.6,1657 633,1663.5 600,1668.4 520,1680 458.6,1681.6 442,1678 384,1661.7 334.7,1650 288.4,1638.6 243.8,1628.7 200.8,1617 154.5,1607.2 101.6,1592.3 100,1585.7 105,1549 110,1511" fill="#000" opacity=".2"/>
<polygon points="520.0,433.0 1091.0,817.0 1116.0,897.0 1121.0,940.0 1125.0,990.0 1127.0,1100.0 1125.0,1372.0 1110.0,1366.5 1100.0,1367.5 1090.0,1370.7 1084.0,1375.0 1080.5,1382.0 1079.0,1392.0 1078.5,1402.0 1076.0,1409.0 1072.0,1415.0 1062.0,1420.0 1049.0,1425.0 1032.0,1430.0 1016.0,1435.0 1000.0,1441.0 986.0,1448.0 970.0,1456.0 954.0,1465.0 924.0,1480.0 765.0,1558.5 600.0,1635.5 473.0,1691.0 234.0,1257.0" fill="url(#fab)"/>
<polygon points="520.0,433.0 1091.0,817.0 1116.0,897.0 1121.0,940.0 1125.0,990.0 1127.0,1100.0 1125.0,1372.0 1110.0,1366.5 1100.0,1367.5 1090.0,1370.7 1084.0,1375.0 1080.5,1382.0 1079.0,1392.0 1078.5,1402.0 1076.0,1409.0 1072.0,1415.0 1062.0,1420.0 1049.0,1425.0 1032.0,1430.0 1016.0,1435.0 1000.0,1441.0 986.0,1448.0 970.0,1456.0 954.0,1465.0 924.0,1480.0 765.0,1558.5 600.0,1635.5 473.0,1691.0 234.0,1257.0" fill="url(#tip)"/>
<g clip-path="url(#gclip)"><g filter="url(#blur8)"><polygon points="1008,1100 1046,1100 1046,1460 990,1460 978,1400" fill="url(#dband)"/><polygon points="945,1150 985,1150 982,1470 935,1470 922,1420" fill="url(#lband)"/></g></g>
<polygon points="520.0,433.0 949.6,725.4 947.0,760.0 991.0,752.0 1090.0,816.0 1118.0,895.0 1113.0,901.0 1090.0,899.0 1063.0,880.0 1053.0,864.0 1034.0,839.0 1020.0,829.0 1014.0,816.0 985.0,808.0 960.0,816.0 935.0,812.0 918.0,804.0 892.0,816.0 857.0,815.0 836.0,814.0 819.0,810.0 805.0,789.0 809.0,769.0 815.0,756.0 826.0,752.0 846.0,750.0 865.0,750.0 877.0,754.0 873.0,750.0 856.0,731.0 842.0,713.0 823.0,713.0 819.0,705.0 790.0,686.0 784.0,678.0 766.0,680.0 743.0,686.0 710.0,692.0 695.0,684.0 683.0,688.0 683.0,698.0 672.0,717.0 650.0,725.0 643.0,727.0 617.0,747.0 584.0,780.0 551.0,813.0 528.0,840.0 511.0,870.0 504.0,880.0 497.0,897.0 497.0,904.0 477.0,935.0 468.0,961.0 453.0,992.0 441.0,1013.0 424.0,1023.0 422.0,1044.0 403.0,1054.0 404.5,1068.0 394.0,1082.0 365.0,1089.5 349.0,1097.0 322.0,1125.0 319.0,1147.0 308.0,1173.0 303.0,1189.5 291.0,1204.0 260.5,1208.6 252.0,1199.0 321.7,1004.0 329.0,998.0 389.0,834.0 382.0,830.0" fill="url(#opat)" stroke="url(#opat)" stroke-width="7" stroke-dasharray="5 4" stroke-linecap="round" stroke-linejoin="round" clip-path="url(#gclip)"/>
<g clip-path="url(#gclip)"><g fill="url(#opat)"><circle cx="1110.8" cy="900.8" r="3.5"/><circle cx="1097.0" cy="899.6" r="3.2"/><circle cx="1087.1" cy="897.0" r="4.1"/><circle cx="1080.7" cy="892.4" r="4.5"/><circle cx="1071.8" cy="886.2" r="4.3"/><circle cx="1062.8" cy="879.7" r="3.3"/><circle cx="1056.7" cy="870.0" r="5.5"/><circle cx="1052.5" cy="863.4" r="3.7"/><circle cx="1044.3" cy="852.5" r="5.8"/><circle cx="1038.1" cy="844.4" r="4.2"/><circle cx="1025.8" cy="833.1" r="3.1"/><circle cx="1016.9" cy="822.3" r="3.9"/><circle cx="1013.2" cy="815.8" r="3.4"/><circle cx="1002.5" cy="812.8" r="5.4"/><circle cx="993.6" cy="810.4" r="4.7"/><circle cx="980.2" cy="809.5" r="4.1"/><circle cx="968.4" cy="813.3" r="3.2"/><circle cx="959.6" cy="815.9" r="3.6"/><circle cx="942.4" cy="813.2" r="4.3"/><circle cx="933.4" cy="811.2" r="4.8"/><circle cx="924.2" cy="806.9" r="3.9"/><circle cx="913.9" cy="805.9" r="5.1"/><circle cx="908.1" cy="808.6" r="4.7"/><circle cx="897.9" cy="813.3" r="5.6"/><circle cx="886.9" cy="815.9" r="3.9"/><circle cx="873.5" cy="815.5" r="3.4"/><circle cx="865.7" cy="815.2" r="5.3"/><circle cx="856.0" cy="815.0" r="4.5"/><circle cx="846.3" cy="814.5" r="5.0"/><circle cx="828.2" cy="812.2" r="4.7"/><circle cx="815.3" cy="804.5" r="3.9"/><circle cx="809.1" cy="795.1" r="4.8"/><circle cx="805.7" cy="785.5" r="4.4"/><circle cx="808.0" cy="774.0" r="5.8"/><circle cx="810.7" cy="765.3" r="5.0"/><circle cx="815.4" cy="755.9" r="5.1"/><circle cx="829.9" cy="751.6" r="6.0"/><circle cx="840.9" cy="750.5" r="3.9"/><circle cx="848.2" cy="750.0" r="5.0"/><circle cx="855.6" cy="750.0" r="4.4"/><circle cx="866.2" cy="750.4" r="3.4"/><circle cx="876.9" cy="753.9" r="5.3"/><circle cx="872.3" cy="749.3" r="3.7"/><circle cx="862.5" cy="738.3" r="5.6"/><circle cx="855.7" cy="730.6" r="4.3"/><circle cx="846.7" cy="719.0" r="5.7"/><circle cx="837.3" cy="713.0" r="5.6"/><circle cx="830.9" cy="713.0" r="4.2"/><circle cx="822.1" cy="711.3" r="5.7"/><circle cx="813.4" cy="701.4" r="3.5"/><circle cx="808.3" cy="698.0" r="3.7"/><circle cx="798.3" cy="691.4" r="4.5"/><circle cx="787.9" cy="683.2" r="3.8"/><circle cx="784.0" cy="678.0" r="4.3"/><circle cx="773.0" cy="679.2" r="4.7"/><circle cx="759.4" cy="681.7" r="5.1"/><circle cx="750.9" cy="683.9" r="4.9"/><circle cx="738.5" cy="686.8" r="3.2"/><circle cx="726.1" cy="689.1" r="5.3"/><circle cx="715.2" cy="691.0" r="5.4"/><circle cx="706.5" cy="690.1" r="4.2"/><circle cx="694.3" cy="684.2" r="4.9"/><circle cx="683.0" cy="688.4" r="3.2"/><circle cx="682.3" cy="699.2" r="3.5"/><circle cx="676.4" cy="709.4" r="3.2"/><circle cx="672.0" cy="717.0" r="3.5"/><circle cx="660.3" cy="721.2" r="4.1"/><circle cx="649.9" cy="725.0" r="5.6"/><circle cx="639.8" cy="729.5" r="3.4"/><circle cx="633.0" cy="734.7" r="4.0"/><circle cx="623.8" cy="741.8" r="3.4"/><circle cx="613.6" cy="750.4" r="6.0"/><circle cx="608.6" cy="755.4" r="4.5"/><circle cx="603.5" cy="760.5" r="3.3"/><circle cx="595.8" cy="768.2" r="3.8"/><circle cx="587.3" cy="776.7" r="3.5"/><circle cx="583.9" cy="780.1" r="5.9"/><circle cx="575.3" cy="788.7" r="3.4"/><circle cx="568.6" cy="795.4" r="3.1"/><circle cx="562.1" cy="801.9" r="5.9"/><circle cx="554.2" cy="809.8" r="5.1"/><circle cx="549.8" cy="814.4" r="4.1"/><circle cx="542.6" cy="822.9" r="5.3"/><circle cx="533.2" cy="833.9" r="5.3"/><circle cx="526.9" cy="842.0" r="3.7"/><circle cx="519.6" cy="854.9" r="6.0"/><circle cx="513.8" cy="865.1" r="5.4"/><circle cx="507.6" cy="874.9" r="5.2"/><circle cx="503.5" cy="881.2" r="4.6"/><circle cx="499.8" cy="890.3" r="3.1"/><circle cx="497.0" cy="897.1" r="3.8"/><circle cx="496.2" cy="905.2" r="5.1"/><circle cx="489.1" cy="916.2" r="4.3"/><circle cx="484.2" cy="923.9" r="6.0"/><circle cx="479.1" cy="931.7" r="4.1"/><circle cx="476.6" cy="936.1" r="3.7"/><circle cx="473.6" cy="944.7" r="3.6"/><circle cx="469.9" cy="955.6" r="5.7"/><circle cx="465.5" cy="966.2" r="4.4"/><circle cx="461.0" cy="975.4" r="5.4"/><circle cx="457.7" cy="982.2" r="5.0"/><circle cx="449.7" cy="997.7" r="5.3"/><circle cx="444.3" cy="1007.2" r="4.4"/><circle cx="440.1" cy="1013.5" r="5.4"/><circle cx="430.8" cy="1019.0" r="5.4"/><circle cx="423.4" cy="1029.1" r="4.2"/><circle cx="422.8" cy="1036.0" r="5.8"/><circle cx="417.9" cy="1046.2" r="3.5"/><circle cx="411.8" cy="1049.4" r="3.5"/><circle cx="403.8" cy="1061.6" r="5.4"/><circle cx="403.6" cy="1069.2" r="5.5"/><circle cx="388.3" cy="1083.5" r="5.0"/><circle cx="382.3" cy="1085.0" r="4.6"/><circle cx="373.9" cy="1087.2" r="3.0"/><circle cx="355.7" cy="1093.9" r="4.9"/><circle cx="346.9" cy="1099.2" r="5.8"/><circle cx="340.5" cy="1105.8" r="5.6"/><circle cx="332.2" cy="1114.5" r="3.6"/><circle cx="327.7" cy="1119.1" r="3.9"/><circle cx="321.8" cy="1126.6" r="4.8"/><circle cx="320.3" cy="1137.7" r="4.3"/><circle cx="318.7" cy="1147.7" r="5.7"/><circle cx="314.6" cy="1157.5" r="4.4"/><circle cx="310.4" cy="1167.4" r="5.7"/><circle cx="306.7" cy="1177.2" r="5.8"/><circle cx="301.2" cy="1191.7" r="4.6"/><circle cx="295.1" cy="1199.0" r="3.1"/><circle cx="288.3" cy="1204.4" r="3.5"/><circle cx="280.8" cy="1205.5" r="5.4"/><circle cx="269.6" cy="1207.2" r="4.4"/><circle cx="256.8" cy="1204.4" r="4.7"/><circle cx="252.6" cy="1197.3" r="4.6"/><circle cx="256.0" cy="1187.7" r="5.4"/><circle cx="258.3" cy="1181.5" r="4.7"/><circle cx="261.5" cy="1172.3" r="3.8"/><circle cx="265.5" cy="1161.2" r="4.5"/><circle cx="268.2" cy="1153.8" r="5.3"/><circle cx="271.8" cy="1143.5" r="4.3"/><circle cx="274.3" cy="1136.5" r="4.5"/><circle cx="277.2" cy="1128.6" r="5.1"/><circle cx="280.1" cy="1120.4" r="4.6"/><circle cx="283.2" cy="1111.8" r="5.8"/><circle cx="286.6" cy="1102.2" r="5.6"/><circle cx="290.1" cy="1092.5" r="3.8"/><circle cx="292.4" cy="1085.9" r="5.8"/><circle cx="296.0" cy="1076.0" r="3.4"/><circle cx="297.7" cy="1071.2" r="4.3"/><circle cx="300.6" cy="1063.0" r="3.7"/><circle cx="303.7" cy="1054.5" r="5.0"/><circle cx="308.0" cy="1042.4" r="5.7"/><circle cx="309.9" cy="1037.1" r="5.1"/><circle cx="313.8" cy="1026.1" r="3.4"/><circle cx="317.2" cy="1016.5" r="5.9"/><circle cx="319.1" cy="1011.4" r="5.9"/><circle cx="323.4" cy="1002.6" r="4.5"/><circle cx="330.9" cy="992.9" r="5.5"/><circle cx="332.5" cy="988.5" r="4.3"/><circle cx="336.3" cy="978.1" r="4.0"/><circle cx="338.8" cy="971.1" r="4.0"/><circle cx="343.0" cy="959.7" r="3.1"/><circle cx="345.8" cy="952.0" r="4.3"/><circle cx="348.0" cy="946.1" r="4.0"/><circle cx="352.3" cy="934.3" r="4.5"/><circle cx="354.4" cy="928.6" r="6.0"/><circle cx="358.9" cy="916.2" r="5.9"/><circle cx="360.8" cy="911.1" r="3.8"/><circle cx="363.8" cy="902.8" r="5.3"/><circle cx="367.4" cy="893.0" r="3.4"/><circle cx="370.9" cy="883.6" r="5.7"/><circle cx="374.8" cy="872.9" r="3.8"/><circle cx="376.7" cy="867.8" r="5.8"/><circle cx="380.6" cy="856.9" r="5.1"/><circle cx="382.9" cy="850.8" r="3.2"/><circle cx="387.1" cy="839.1" r="4.3"/><circle cx="388.7" cy="833.8" r="5.8"/></g></g>
<polygon points="488.0,741.0 542.0,742.0 518.0,784.0 485.0,804.0 488.0,764.0" fill="#dcdaa8" stroke="#dcdaa8" stroke-width="4" stroke-dasharray="5 4" stroke-linecap="round"/>
<polyline points="234,1257 473,1691 600,1635.5 765,1558.5 924,1480 954.0,1465.0 970.0,1456.0 986.0,1448.0 1000.0,1441.0 1016.0,1435.0 1032.0,1430.0 1049.0,1425.0 1062.0,1420.0 1072.0,1415.0 1076.0,1409.0 1078.5,1402.0 1079.0,1392.0 1080.5,1382.0 1084.0,1375.0 1090.0,1370.7 1100.0,1367.5 1110.0,1366.5" fill="none" stroke="#fbf500" stroke-width="3" stroke-linejoin="round"/>
<polyline points="1114,900 1119,935 1122,965 1123.5,1000 1123.5,1150 1120,1300 1117,1372" fill="none" stroke="#fbf500" stroke-width="5"/>
<polyline points="382,830 234,1257" fill="none" stroke="#fbf500" stroke-width="3"/>
<polyline points="252,1199 520,433 949.6,725.4" fill="none" stroke="#fbf500" stroke-width="3"/>
<polyline points="991,752 1090,816 1117,897" fill="none" stroke="#fbf500" stroke-width="3"/>
<polyline points="949.6,725.4 991,752" fill="none" stroke="#fbf500" stroke-width="4"/>
<polyline points="321.7,1004 254.1,1199" fill="none" stroke="#e04e5a" stroke-width="4" stroke-dasharray="8 3"/>
<polyline points="382,830 520,433 949.6,725.4" fill="none" stroke="#e04e5a" stroke-width="4" stroke-dasharray="8 3"/>
<polyline points="991,752 1090,816 1117,897" fill="none" stroke="#e04e5a" stroke-width="4" stroke-dasharray="8 3"/>
<circle cx="520" cy="435" r="5" fill="#e04e4e"/>
<g stroke="#fbf500" stroke-width="4.5" stroke-linecap="round"><line x1="592" y1="485" x2="604" y2="493"/><line x1="715" y1="572" x2="728" y2="580"/><line x1="795" y1="625" x2="808" y2="633"/><line x1="464" y1="596" x2="468" y2="586"/></g>
<g fill="#dcdaa8"><circle cx="575" cy="523" r="3"/><circle cx="714" cy="579" r="5"/><circle cx="797" cy="631" r="4"/></g>
</g>
</svg>
<div class="a" style="left:120px;top:364px;width:50px;height:50px;border:2px solid #6a6a6a;background:rgba(40,40,42,.35)"></div>
<div class="a" style="left:120px;top:422px;width:50px;height:50px;border:2px solid #6a6a6a;background:rgba(40,40,42,.35)"></div>
<div class="a" style="left:120px;top:480px;width:50px;height:50px;border:2px solid #6a6a6a;background:rgba(40,40,42,.35)"></div>
<div class="a" style="left:120px;top:538px;width:50px;height:50px;border:2px solid #8a8a8a;background:rgba(30,30,30,.55)"></div>
<div class="a" style="left:120px;top:596px;width:50px;height:50px;border:2px solid #6a6a6a;background:rgba(40,40,42,.35)"></div>
<div class="a" style="left:120px;top:654px;width:50px;height:50px;border:2px solid #6a6a6a;background:rgba(40,40,42,.35)"></div>
<div class="a" style="left:120px;top:712px;width:50px;height:50px;border:2px solid #6a6a6a;background:rgba(40,40,42,.35)"></div>
<svg style="left:122px;top:366px" width="46" height="46" viewBox="0 0 46 46"><defs><linearGradient id="wsh" x1="0" y1="0" x2="1" y2="1"><stop offset="0" stop-color="#fff"/><stop offset="1" stop-color="#bbb"/></linearGradient></defs><path d="M3 9l9-6h5c1 3 3 4 5 4s4-1 5-4h5l9 6-4 8-5-3v20H12V14l-5 3z" transform="translate(2,2) scale(0.95)" fill="url(#wsh)"/><g transform="translate(2,29)"><path d="M0 7c5-7 15-7 20 0-5 7-15 7-20 0z" fill="#111"/><circle cx="10" cy="7" r="4" fill="#eee"/><circle cx="10" cy="7" r="2.4" fill="#111"/></g></svg>
<svg style="left:122px;top:424px" width="46" height="46" viewBox="0 0 46 46"><g fill="#f5a800"><circle cx="24" cy="8" r="4"/><circle cx="35" cy="12" r="5"/><circle cx="38" cy="24" r="5"/><circle cx="30" cy="34" r="6"/><circle cx="15" cy="12" r="3.5"/><circle cx="11" cy="22" r="4"/><circle cx="17" cy="33" r="4"/><circle cx="8" cy="40" r="3.5" fill="#e08a00"/></g></svg>
<svg style="left:122px;top:482px" width="46" height="46" viewBox="0 0 46 46"><defs><linearGradient id="gsh" x1="0" y1="0" x2="0" y2="1"><stop offset="0" stop-color="#ddd"/><stop offset="1" stop-color="#8a8a8a"/></linearGradient></defs><circle cx="24" cy="13" r="9" fill="url(#gsh)"/><path d="M8 44c0-12 6-19 16-19s16 7 16 19z" fill="url(#gsh)"/><g transform="translate(2,29)"><path d="M0 7c5-7 15-7 20 0-5 7-15 7-20 0z" fill="#111"/><circle cx="10" cy="7" r="4" fill="#eee"/><circle cx="10" cy="7" r="2.4" fill="#111"/></g></svg>
<svg style="left:122px;top:540px" width="46" height="46" viewBox="0 0 46 46"><defs><linearGradient id="obk" x1="0" y1="0" x2="1" y2="1"><stop offset="0" stop-color="#ffc000"/><stop offset="1" stop-color="#e86800"/></linearGradient></defs><path d="M14 6h26v28c-6 2-18 2-26 0z" fill="url(#obk)"/><path d="M6 16h10v18c4 6 18 6 24 0v6c-8 6-26 6-34 0z" fill="#d06000"/><path d="M14 34c6 2 18 2 24-1" stroke="#fff" stroke-width="3" fill="none"/><path d="M40 44l4-4v4z" fill="#888"/></svg>
<svg style="left:122px;top:598px" width="46" height="46" viewBox="0 0 46 46"><defs><linearGradient id="mtl" x1="0" y1="0" x2="1" y2="0"><stop offset="0" stop-color="#222"/><stop offset=".6" stop-color="#eee"/><stop offset="1" stop-color="#555"/></linearGradient></defs><path d="M16 10h24v24c-6 4-16 4-22 0z" fill="url(#mtl)"/><path d="M8 18h10v16l4 4c-6 0-12-2-14-4z" fill="#333"/></svg>
<svg style="left:122px;top:656px" width="46" height="46" viewBox="0 0 46 46"><defs><linearGradient id="hd" x1="0" y1="0" x2="0" y2="1"><stop offset="0" stop-color="#d8d8d8"/><stop offset="1" stop-color="#9a9a9a"/></linearGradient></defs><ellipse cx="24" cy="18" rx="11" ry="13" fill="url(#hd)"/><path d="M18 28h12l2 8c6 1 9 4 9 6H7c0-2 3-5 9-6z" fill="url(#hd)"/></svg>
<svg style="left:122px;top:714px" width="46" height="46" viewBox="0 0 46 46"><circle cx="25" cy="21" r="16" fill="none" stroke="#f0a000" stroke-width="3"/><path d="M9 21h32M25 5v32M12 13h26M12 29h26M25 5c-8 8-8 24 0 32M25 5c8 8 8 24 0 32" stroke="#f0a000" stroke-width="2.5" fill="none"/><g transform="translate(2,29)"><path d="M0 7c5-7 15-7 20 0-5 7-15 7-20 0z" fill="#111"/><circle cx="10" cy="7" r="4" fill="#eee"/><circle cx="10" cy="7" r="2.4" fill="#111"/></g></svg>
<svg style="left:1312px;top:337px" width="958" height="1413" viewBox="1312 337 958 1413">
<rect x="1312" y="337" width="958" height="1413" fill="#fff"/>
<rect x="1316" y="342" width="950" height="1403" fill="#c8c8c8"/>
<g stroke="#bcbcbc" stroke-width="2"><line x1="1347.20" y1="342" x2="1347.20" y2="1745"/><line x1="1378.90" y1="342" x2="1378.90" y2="1745"/><line x1="1410.60" y1="342" x2="1410.60" y2="1745"/><line x1="1442.30" y1="342" x2="1442.30" y2="1745"/><line x1="1474.00" y1="342" x2="1474.00" y2="1745"/><line x1="1505.70" y1="342" x2="1505.70" y2="1745"/><line x1="1537.40" y1="342" x2="1537.40" y2="1745"/><line x1="1569.10" y1="342" x2="1569.10" y2="1745"/><line x1="1600.80" y1="342" x2="1600.80" y2="1745"/><line x1="1632.50" y1="342" x2="1632.50" y2="1745"/><line x1="1664.20" y1="342" x2="1664.20" y2="1745"/><line x1="1695.90" y1="342" x2="1695.90" y2="1745"/><line x1="1727.60" y1="342" x2="1727.60" y2="1745"/><line x1="1759.30" y1="342" x2="1759.30" y2="1745"/><line x1="1822.70" y1="342" x2="1822.70" y2="1745"/><line x1="1854.40" y1="342" x2="1854.40" y2="1745"/><line x1="1886.10" y1="342" x2="1886.10" y2="1745"/><line x1="1917.80" y1="342" x2="1917.80" y2="1745"/><line x1="1949.50" y1="342" x2="1949.50" y2="1745"/><line x1="1981.20" y1="342" x2="1981.20" y2="1745"/><line x1="2012.90" y1="342" x2="2012.90" y2="1745"/><line x1="2044.60" y1="342" x2="2044.60" y2="1745"/><line x1="2076.30" y1="342" x2="2076.30" y2="1745"/><line x1="2108.00" y1="342" x2="2108.00" y2="1745"/><line x1="2139.70" y1="342" x2="2139.70" y2="1745"/><line x1="2171.40" y1="342" x2="2171.40" y2="1745"/><line x1="2203.10" y1="342" x2="2203.10" y2="1745"/><line x1="2234.80" y1="342" x2="2234.80" y2="1745"/><line x1="1316" y1="346.60" x2="2266" y2="346.60"/><line x1="1316" y1="378.30" x2="2266" y2="378.30"/><line x1="1316" y1="410.00" x2="2266" y2="410.00"/><line x1="1316" y1="441.70" x2="2266" y2="441.70"/><line x1="1316" y1="473.40" x2="2266" y2="473.40"/><line x1="1316" y1="505.10" x2="2266" y2="505.10"/><line x1="1316" y1="536.80" x2="2266" y2="536.80"/><line x1="1316" y1="568.50" x2="2266" y2="568.50"/><line x1="1316" y1="600.20" x2="2266" y2="600.20"/><line x1="1316" y1="631.90" x2="2266" y2="631.90"/><line x1="1316" y1="663.60" x2="2266" y2="663.60"/><line x1="1316" y1="695.30" x2="2266" y2="695.30"/><line x1="1316" y1="727.00" x2="2266" y2="727.00"/><line x1="1316" y1="758.70" x2="2266" y2="758.70"/><line x1="1316" y1="790.40" x2="2266" y2="790.40"/><line x1="1316" y1="822.10" x2="2266" y2="822.10"/><line x1="1316" y1="853.80" x2="2266" y2="853.80"/><line x1="1316" y1="885.50" x2="2266" y2="885.50"/><line x1="1316" y1="917.20" x2="2266" y2="917.20"/><line x1="1316" y1="948.90" x2="2266" y2="948.90"/><line x1="1316" y1="980.60" x2="2266" y2="980.60"/><line x1="1316" y1="1012.30" x2="2266" y2="1012.30"/><line x1="1316" y1="1044.00" x2="2266" y2="1044.00"/><line x1="1316" y1="1075.70" x2="2266" y2="1075.70"/><line x1="1316" y1="1107.40" x2="2266" y2="1107.40"/><line x1="1316" y1="1139.10" x2="2266" y2="1139.10"/><line x1="1316" y1="1170.80" x2="2266" y2="1170.80"/><line x1="1316" y1="1202.50" x2="2266" y2="1202.50"/><line x1="1316" y1="1234.20" x2="2266" y2="1234.20"/><line x1="1316" y1="1265.90" x2="2266" y2="1265.90"/><line x1="1316" y1="1297.60" x2="2266" y2="1297.60"/><line x1="1316" y1="1329.30" x2="2266" y2="1329.30"/><line x1="1316" y1="1392.70" x2="2266" y2="1392.70"/><line x1="1316" y1="1424.40" x2="2266" y2="1424.40"/><line x1="1316" y1="1456.10" x2="2266" y2="1456.10"/><line x1="1316" y1="1487.80" x2="2266" y2="1487.80"/><line x1="1316" y1="1519.50" x2="2266" y2="1519.50"/><line x1="1316" y1="1551.20" x2="2266" y2="1551.20"/><line x1="1316" y1="1582.90" x2="2266" y2="1582.90"/><line x1="1316" y1="1614.60" x2="2266" y2="1614.60"/><line x1="1316" y1="1646.30" x2="2266" y2="1646.30"/><line x1="1316" y1="1678.00" x2="2266" y2="1678.00"/><line x1="1316" y1="1709.70" x2="2266" y2="1709.70"/><line x1="1316" y1="1741.40" x2="2266" y2="1741.40"/></g>
<line x1="1791" y1="342" x2="1791" y2="1745" stroke="#8c8c8c" stroke-width="2"/>
<line x1="1316" y1="1361" x2="2266" y2="1361" stroke="#8c8c8c" stroke-width="2"/>
<polygon points="1689.0,660.0 2001.6,864.0 2016.0,911.0 2098.0,1140.0 1655.7,1360.5 1524.0,1111.0" fill="#fff"/>
<polygon points="1689.0,660.0 1924.0,816.0 1925.0,832.0 1944.0,829.0 2001.6,864.0 2016.0,911.4 2004.8,913.0 1982.5,900.0 1973.0,884.4 1958.7,868.6 1931.7,865.4 1906.0,863.8 1881.0,867.0 1852.4,863.8 1842.9,849.5 1846.0,832.0 1873.0,829.0 1862.0,811.0 1846.0,810.0 1827.0,794.0 1804.8,797.0 1779.0,797.0 1770.0,814.6 1744.4,827.3 1728.6,846.0 1706.0,862.0 1690.5,887.6 1671.4,906.7 1662.0,935.0 1649.0,960.6 1630.0,979.7 1623.8,998.7 1611.0,1014.6 1592.0,1021.0 1576.0,1036.8 1566.7,1065.4 1554.0,1082.9 1535.0,1081.0 1531.7,1078.0" fill="#db5858" stroke="#db5858" stroke-width="5" stroke-linejoin="round"/>
<g fill="#db5858"><circle cx="2014.4" cy="911.6" r="5.4"/><circle cx="2002.3" cy="911.6" r="5.6"/><circle cx="1989.5" cy="904.1" r="3.7"/><circle cx="1982.5" cy="899.9" r="6.4"/><circle cx="1977.0" cy="891.0" r="4.3"/><circle cx="1968.7" cy="879.7" r="5.1"/><circle cx="1962.3" cy="872.5" r="5.2"/><circle cx="1955.2" cy="868.2" r="4.0"/><circle cx="1946.3" cy="867.1" r="6.5"/><circle cx="1937.9" cy="866.1" r="6.1"/><circle cx="1926.5" cy="865.1" r="3.7"/><circle cx="1913.0" cy="864.2" r="5.6"/><circle cx="1903.7" cy="864.1" r="3.6"/><circle cx="1887.0" cy="866.2" r="5.2"/><circle cx="1876.9" cy="866.5" r="6.6"/><circle cx="1867.4" cy="865.5" r="6.7"/><circle cx="1859.7" cy="864.6" r="6.3"/><circle cx="1849.9" cy="860.0" r="6.8"/><circle cx="1844.5" cy="840.3" r="3.8"/><circle cx="1846.7" cy="831.9" r="4.3"/><circle cx="1860.2" cy="830.4" r="5.0"/><circle cx="1867.4" cy="829.6" r="4.6"/><circle cx="1871.3" cy="826.3" r="4.9"/><circle cx="1866.3" cy="818.1" r="5.5"/><circle cx="1856.4" cy="810.6" r="6.7"/><circle cx="1842.1" cy="806.7" r="6.8"/><circle cx="1831.6" cy="797.9" r="7.0"/><circle cx="1822.5" cy="794.6" r="4.1"/><circle cx="1810.2" cy="796.3" r="6.9"/><circle cx="1797.8" cy="797.0" r="5.5"/><circle cx="1786.4" cy="797.0" r="4.2"/><circle cx="1776.8" cy="801.4" r="5.5"/><circle cx="1773.7" cy="807.3" r="3.7"/><circle cx="1765.6" cy="816.8" r="7.0"/><circle cx="1761.0" cy="819.1" r="6.3"/><circle cx="1750.8" cy="824.1" r="4.0"/><circle cx="1743.0" cy="828.9" r="6.2"/><circle cx="1732.4" cy="841.5" r="3.7"/><circle cx="1725.8" cy="848.0" r="3.7"/><circle cx="1717.8" cy="853.6" r="4.7"/><circle cx="1709.6" cy="859.5" r="6.9"/><circle cx="1704.4" cy="864.6" r="7.0"/><circle cx="1699.9" cy="872.1" r="3.8"/><circle cx="1693.8" cy="882.1" r="3.6"/><circle cx="1689.7" cy="888.4" r="4.9"/><circle cx="1681.8" cy="896.3" r="4.0"/><circle cx="1677.6" cy="900.5" r="6.5"/><circle cx="1670.8" cy="908.5" r="6.9"/><circle cx="1666.6" cy="921.2" r="4.8"/><circle cx="1664.3" cy="928.2" r="5.3"/><circle cx="1660.3" cy="938.3" r="5.6"/><circle cx="1656.2" cy="946.4" r="5.7"/><circle cx="1650.9" cy="956.9" r="5.3"/><circle cx="1646.5" cy="963.1" r="6.0"/><circle cx="1638.1" cy="971.5" r="4.6"/><circle cx="1628.2" cy="985.3" r="5.3"/><circle cx="1625.9" cy="992.3" r="3.5"/><circle cx="1622.2" cy="1000.7" r="5.5"/><circle cx="1617.3" cy="1006.7" r="5.7"/><circle cx="1607.4" cy="1015.8" r="3.7"/><circle cx="1597.9" cy="1019.0" r="5.1"/><circle cx="1588.7" cy="1024.2" r="4.7"/><circle cx="1580.6" cy="1032.3" r="6.1"/><circle cx="1576.0" cy="1036.9" r="3.7"/><circle cx="1571.6" cy="1050.2" r="6.9"/><circle cx="1569.3" cy="1057.3" r="5.1"/><circle cx="1564.4" cy="1068.5" r="4.6"/><circle cx="1559.0" cy="1076.1" r="4.6"/><circle cx="1551.9" cy="1082.7" r="5.6"/><circle cx="1542.8" cy="1081.8" r="4.8"/><circle cx="1533.5" cy="1079.6" r="3.6"/></g>
<polygon points="1673.0,827.3 1693.7,830.5 1669.8,856.0" fill="#fff"/>
<polyline points="1531.7,1078 1524,1111 1655.7,1360.5 2098,1140 2016,911.4" fill="none" stroke="#ffff00" stroke-width="5" stroke-linejoin="round"/>
<polyline points="1576,964 1609.5,875" fill="none" stroke="#ffff00" stroke-width="4" stroke-dasharray="6 9"/>
<polyline points="1924,816 1944,829" fill="none" stroke="#ffff00" stroke-width="4"/>
<g fill="#222"><circle cx="1524" cy="1111" r="4.5"/><circle cx="1655.7" cy="1360.5" r="4.5"/><circle cx="2098" cy="1140" r="4.5"/></g>
<g stroke="#000" stroke-opacity=".22" stroke-width="3" stroke-dasharray="8 8"><line x1="1810.5" y1="632" x2="1810.5" y2="1392.5"/><line x1="1492" y1="1012" x2="2130" y2="1012"/></g>
<g stroke="#111" stroke-width="3.2" stroke-dasharray="9 7" fill="none"><rect x="1484" y="624" width="654" height="776.5"/><line x1="1810.5" y1="570" x2="1810.5" y2="618"/></g>
<circle cx="1484" cy="624" r="6.5" fill="#c8c8c8" stroke="#111" stroke-width="2.2"/><circle cx="1810.5" cy="624" r="6.5" fill="#c8c8c8" stroke="#111" stroke-width="2.2"/><circle cx="2138" cy="624" r="6.5" fill="#c8c8c8" stroke="#111" stroke-width="2.2"/><circle cx="1484" cy="1012" r="6.5" fill="#c8c8c8" stroke="#111" stroke-width="2.2"/><circle cx="2138" cy="1012" r="6.5" fill="#c8c8c8" stroke="#111" stroke-width="2.2"/><circle cx="1484" cy="1400.5" r="6.5" fill="#c8c8c8" stroke="#111" stroke-width="2.2"/><circle cx="1810.5" cy="1400.5" r="6.5" fill="#c8c8c8" stroke="#111" stroke-width="2.2"/><circle cx="2138" cy="1400.5" r="6.5" fill="#c8c8c8" stroke="#111" stroke-width="2.2"/><circle cx="1810.5" cy="563" r="6.5" fill="#c8c8c8" stroke="#111" stroke-width="2.2"/>
<line x1="1803" y1="1028" x2="1820" y2="994" stroke="#aaa" stroke-width="3"/>
<circle cx="1810.5" cy="1012" r="8" fill="#c8c8c8" stroke="#111" stroke-width="2.5"/>
<path d="M1797.5 1012l5-4v8zM1823.5 1012l-5-4v8zM1810.5 999l-4 5h8zM1810.5 1025l-4-5h8z" fill="#111"/>
</svg>
<div class="a" style="left:1337px;top:362px;width:52px;height:52px;border:2px solid #a9a9a9;background:linear-gradient(#d6d6d6,#c6c6c6);box-shadow:inset 1px 1px 0 #e8e8e8"></div>
<div class="a" style="left:1337px;top:420px;width:52px;height:52px;border:2px solid #a9a9a9;background:linear-gradient(#d6d6d6,#c6c6c6);box-shadow:inset 1px 1px 0 #e8e8e8"></div>
<div class="a" style="left:1337px;top:478px;width:52px;height:52px;border:2px solid #a9a9a9;background:linear-gradient(#d6d6d6,#c6c6c6);box-shadow:inset 1px 1px 0 #e8e8e8"></div>
<div class="a" style="left:1337px;top:537px;width:52px;height:52px;border:2px solid #a9a9a9;background:linear-gradient(#d6d6d6,#c6c6c6);box-shadow:inset 1px 1px 0 #e8e8e8"></div>
<div class="a" style="left:1337px;top:595px;width:52px;height:52px;border:2px solid #a9a9a9;background:linear-gradient(#d6d6d6,#c6c6c6);box-shadow:inset 1px 1px 0 #e8e8e8"></div>
<svg style="left:1339px;top:364px" width="48" height="48" viewBox="0 0 48 48"><path d="M14 6l26 22-3 3L11 9z" fill="#222"/><path d="M12 6c-4 2-6 8-4 16" stroke="#f0a000" stroke-width="2" fill="none"/><g transform="translate(2,29)"><path d="M0 7c5-7 15-7 20 0-5 7-15 7-20 0z" fill="#111"/><circle cx="10" cy="7" r="4" fill="#eee"/><circle cx="10" cy="7" r="2.4" fill="#111"/></g></svg>
<svg style="left:1339px;top:422px" width="48" height="48" viewBox="0 0 48 48"><defs><linearGradient id="wsh2" x1="0" y1="0" x2="1" y2="1"><stop offset="0" stop-color="#fff"/><stop offset="1" stop-color="#ccc"/></linearGradient></defs><path d="M3 9l9-6h5c1 3 3 4 5 4s4-1 5-4h5l9 6-4 8-5-3v20H12V14l-5 3z" transform="translate(3,3) scale(0.95)" fill="url(#wsh2)"/><g transform="translate(2,29)"><path d="M0 7c5-7 15-7 20 0-5 7-15 7-20 0z" fill="#111"/><circle cx="10" cy="7" r="4" fill="#eee"/><circle cx="10" cy="7" r="2.4" fill="#111"/></g></svg>
<svg style="left:1339px;top:480px" width="48" height="48" viewBox="0 0 48 48"><circle cx="26" cy="22" r="15" fill="#333"/><path d="M25 17h5l-3 13h-4z" fill="#f5a800"/><circle cx="28" cy="12" r="2.5" fill="#f5a800"/><g transform="translate(2,29)"><path d="M0 7c5-7 15-7 20 0-5 7-15 7-20 0z" fill="#111"/><circle cx="10" cy="7" r="4" fill="#eee"/><circle cx="10" cy="7" r="2.4" fill="#111"/></g></svg>
<svg style="left:1339px;top:539px" width="48" height="48" viewBox="0 0 48 48"><defs><linearGradient id="obk2" x1="0" y1="0" x2="1" y2="1"><stop offset="0" stop-color="#ffc000"/><stop offset="1" stop-color="#e86800"/></linearGradient></defs><path d="M16 8h24v26c-6 2-16 2-24 0z" fill="url(#obk2)"/><path d="M8 16h10v18c4 4 16 4 22 0v4c-8 6-26 6-32 0z" fill="#fff"/></svg>
<svg style="left:1339px;top:597px" width="48" height="48" viewBox="0 0 48 48"><path d="M3 9l9-6h5c1 3 3 4 5 4s4-1 5-4h5l9 6-4 8-5-3v20H12V14l-5 3z" transform="translate(4,2) scale(0.95)" fill="#8a8a8a"/><rect x="6" y="32" width="10" height="9" fill="#555"/><path d="M8 32v-4a3 3 0 0 1 6 0v4" stroke="#555" stroke-width="2" fill="none"/></svg>
<svg style="left:0;top:0" width="0" height="0"><defs><linearGradient id="ig" x1="0" y1="0" x2="0" y2="1"><stop offset="0" stop-color="#a8a8a8"/><stop offset="1" stop-color="#5e5e5e"/></linearGradient><linearGradient id="igd" x1="0" y1="0" x2="0" y2="1"><stop offset="0" stop-color="#6a6a6a"/><stop offset="1" stop-color="#3a3a3a"/></linearGradient><linearGradient id="igc" x1="0" y1="0" x2="0" y2="1"><stop offset="0" stop-color="#8e8e8e"/><stop offset="1" stop-color="#b0b0b0"/></linearGradient><linearGradient id="org" x1="0" y1="0" x2="0" y2="1"><stop offset="0" stop-color="#ff7a00"/><stop offset="1" stop-color="#ffd000"/></linearGradient><linearGradient id="org2" x1="0" y1="0" x2="1" y2="1"><stop offset="0" stop-color="#ffe000"/><stop offset="1" stop-color="#ff9000"/></linearGradient></defs></svg>
<div class="a" style="left:98px;top:221px;width:2px;height:44px;background:#151515;"></div>
<div class="a" style="left:103px;top:221px;width:2px;height:44px;background:#151515;"></div>
<div class="a" style="left:117px;top:215px;width:62px;height:54px;background:#1c1c1c;box-shadow:inset 0 0 0 1px #303030"></div>
<svg style="left:117px;top:214px" width="62" height="54" viewBox="0 0 62 54"><path d="M24 10h14v16h10L31 46 14 26h10z" fill="url(#org)"/><path d="M58 38v12H46z" fill="#5c5c5c"/></svg>
<div class="a" style="left:198px;top:221px;width:2px;height:44px;background:#151515;"></div>
<div class="a" style="left:203px;top:221px;width:2px;height:44px;background:#151515;"></div>
<div class="a" style="left:217px;top:215px;width:62px;height:54px;background:#1c1c1c;box-shadow:inset 0 0 0 1px #303030"></div>
<svg style="left:217px;top:214px" width="62" height="54" viewBox="0 0 62 54"><path d="M3 4v18l5-6h9z" fill="url(#ig)"/><path d="M38 22v24M26 34h24" stroke="#f5b000" stroke-width="2.4"/><path d="M38 19l-3.5 5h7zM38 49l-3.5-5h7zM23 34l5-3.5v7zM53 34l-5-3.5v7z" fill="#f5b000"/></svg>
<svg style="left:293px;top:217px" width="56" height="56" viewBox="0 0 56 56"><path d="M3 4v18l5-6h9z" fill="url(#ig)"/><circle cx="22" cy="34" r="9" fill="none" stroke="#9a9a9a" stroke-width="2" stroke-dasharray="3 2"/><path d="M24 44l22-22 4 4-22 22z" fill="url(#ig)"/><path d="M52 42v10H42z" fill="#5c5c5c"/></svg>
<div class="a" style="left:372px;top:221px;width:2px;height:44px;background:#151515;"></div>
<div class="a" style="left:377px;top:221px;width:2px;height:44px;background:#151515;"></div>
<svg style="left:392px;top:217px" width="56" height="56" viewBox="0 0 56 56"><path d="M3 4v18l5-6h9z" fill="url(#ig)"/><path d="M15 22h22c3 0 5 2 5 5v23H16v-6h16V32H22v5h-4v-5h-3z" fill="url(#ig)"/><path d="M34 16h4v6h-4z" fill="#8a8a8a"/></svg>
<svg style="left:468px;top:217px" width="56" height="56" viewBox="0 0 56 56"><path d="M14 10h22c3 0 5 2 5 5v23H31V20H21v5h-4v-5h-3z" fill="url(#igd)"/><path d="M33 4h4v6h-4z" fill="#666"/><path d="M6 42h26" stroke="#bbb" stroke-width="2"/><circle cx="6" cy="42" r="3.6" fill="#d8d8d8"/><circle cx="32" cy="42" r="3.6" fill="#d8d8d8"/><path d="M52 42v10H42z" fill="#5c5c5c"/></svg>
<svg style="left:542px;top:217px" width="56" height="56" viewBox="0 0 56 56"><path d="M14 10h22c3 0 5 2 5 5v23H31V20H21v5h-4v-5h-3z" fill="url(#igd)"/><path d="M33 4h4v6h-4z" fill="#666"/><path d="M4 44c6-8 10 4 16-2s10 4 16-2" stroke="#bbb" stroke-width="2" fill="none"/><circle cx="20" cy="42" r="3.6" fill="#d8d8d8"/><path d="M52 42v10H42z" fill="#5c5c5c"/></svg>
<div class="a" style="left:619px;top:221px;width:2px;height:44px;background:#151515;"></div>
<div class="a" style="left:624px;top:221px;width:2px;height:44px;background:#151515;"></div>
<svg style="left:640px;top:217px" width="56" height="56" viewBox="0 0 56 56"><path d="M3 4v18l5-6h9z" fill="url(#ig)"/><path d="M14 50L44 14" stroke="#aaa" stroke-width="2"/><circle cx="45" cy="12" r="5" fill="#ddd"/></svg>
<svg style="left:718px;top:217px" width="56" height="56" viewBox="0 0 56 56"><path d="M6 30c0-12 14-22 30-22h14v34c-6 6-18 8-30 6C10 46 6 40 6 30z" fill="url(#igd)"/><ellipse cx="12" cy="30" rx="6" ry="10" fill="#2a2a2a"/><path d="M30 24l14 10" stroke="#bbb" stroke-width="2"/><circle cx="44" cy="34" r="3.6" fill="#d8d8d8"/><path d="M52 42v10H42z" fill="#5c5c5c"/></svg>
<div class="a" style="left:794px;top:221px;width:2px;height:44px;background:#151515;"></div>
<div class="a" style="left:799px;top:221px;width:2px;height:44px;background:#151515;"></div>
<svg style="left:815px;top:217px" width="56" height="56" viewBox="0 0 56 56"><path d="M3 4v18l5-6h9z" fill="url(#ig)"/><path d="M20 20l-6 18 18 6 4-8 12-6" stroke="#bbb" stroke-width="2" fill="none"/><circle cx="20" cy="20" r="3.6" fill="#d8d8d8"/><circle cx="46" cy="30" r="3.6" fill="#d8d8d8"/></svg>
<svg style="left:890px;top:217px" width="56" height="56" viewBox="0 0 56 56"><path d="M8 24c10-10 24-14 40-6v20c-12 6-28 4-40 2z" fill="url(#igd)"/><path d="M12 20c-4 8-6 12-2 16 10 2 22 0 30 4l6-8" stroke="#bbb" stroke-width="2" fill="none"/><circle cx="14" cy="20" r="3.6" fill="#d8d8d8"/><circle cx="46" cy="32" r="3.6" fill="#d8d8d8"/><path d="M52 42v10H42z" fill="#5c5c5c"/></svg>
<div class="a" style="left:968px;top:221px;width:2px;height:44px;background:#151515;"></div>
<div class="a" style="left:973px;top:221px;width:2px;height:44px;background:#151515;"></div>
<svg style="left:994px;top:217px" width="50" height="52" viewBox="0 0 50 52"><path d="M6 26l10-14v32H40l6-8H16" stroke="#5a5a5a" stroke-width="2" fill="none"/><path d="M18 26c8-2 14 0 18 8" stroke="#ccc" stroke-width="4" fill="none"/><path d="M40 30l-2 10-8-4z" fill="#ccc"/></svg>
<svg style="left:1121px;top:236px" width="16" height="22" viewBox="0 0 16 22"><path d="M1.5 1c3 3 4.5 6 4.5 10s-1.5 7-4.5 10M8.5 1c3 3 4.5 6 4.5 10s-1.5 7-4.5 10" stroke="#181818" stroke-width="2.6" fill="none"/></svg>
<div class="a" style="left:1158px;top:221px;width:2px;height:44px;background:#151515;"></div>
<div class="a" style="left:1163px;top:221px;width:2px;height:44px;background:#151515;"></div>
<svg style="left:1195.6px;top:236px" width="16" height="22" viewBox="0 0 16 22"><path d="M1.5 1c3 3 4.5 6 4.5 10s-1.5 7-4.5 10M8.5 1c3 3 4.5 6 4.5 10s-1.5 7-4.5 10" stroke="#181818" stroke-width="2.6" fill="none"/></svg>
<div class="a" style="left:1231px;top:221px;width:2px;height:44px;background:#151515;"></div>
<div class="a" style="left:1236px;top:221px;width:2px;height:44px;background:#151515;"></div>
<svg style="left:1270px;top:236px" width="16" height="22" viewBox="0 0 16 22"><path d="M1.5 1c3 3 4.5 6 4.5 10s-1.5 7-4.5 10M8.5 1c3 3 4.5 6 4.5 10s-1.5 7-4.5 10" stroke="#181818" stroke-width="2.6" fill="none"/></svg>
<div class="a" style="left:98px;top:285px;width:2px;height:44px;background:#151515;"></div>
<div class="a" style="left:103px;top:285px;width:2px;height:44px;background:#151515;"></div>
<svg style="left:118px;top:279px" width="56" height="56" viewBox="0 0 56 56"><path d="M3 6v14l9-7z" fill="url(#ig)"/><circle cx="32" cy="10" r="5" fill="#9a9a9a"/><path d="M26 18l10 2 6 10h8M28 20l-6 14-4 16M30 34l8 10 2 8M26 24l-8 6" stroke="#8a8a8a" stroke-width="6" fill="none" stroke-linecap="round"/></svg>
<div class="a" style="left:198px;top:285px;width:2px;height:44px;background:#151515;"></div>
<div class="a" style="left:203px;top:285px;width:2px;height:44px;background:#151515;"></div>
<svg style="left:218px;top:279px" width="56" height="56" viewBox="0 0 56 56"><path d="M3 4v18l5-6h9z" fill="url(#ig)"/><path d="M4 20l10-7h6c1 3 3 4 6 4s5-1 6-4h6l10 7-5 8-5-3v22H14V25l-5 3z" fill="url(#igd)" transform="translate(6,4) scale(.85)"/><path d="M16 24c8 6 12 20 20 22" stroke="#ccc" stroke-width="1.8" fill="none"/><circle cx="16" cy="24" r="3.6" fill="#d8d8d8"/><circle cx="38" cy="46" r="3.6" fill="#d8d8d8"/></svg>
<svg style="left:293px;top:279px" width="56" height="56" viewBox="0 0 56 56"><path d="M4 20l10-7h6c1 3 3 4 6 4s5-1 6-4h6l10 7-5 8-5-3v22H14V25l-5 3z" fill="url(#igd)" transform="scale(.95)"/><path d="M6 18c8 6 12 20 20 26" stroke="#ccc" stroke-width="1.8" fill="none"/><path d="M26 30l16-20 6 4-16 20z" fill="url(#ig)"/><circle cx="6" cy="18" r="3.6" fill="#d8d8d8"/><circle cx="28" cy="46" r="3.6" fill="#d8d8d8"/></svg>
<div class="a" style="left:372px;top:285px;width:2px;height:44px;background:#151515;"></div>
<div class="a" style="left:377px;top:285px;width:2px;height:44px;background:#151515;"></div>
<svg style="left:392px;top:279px" width="56" height="56" viewBox="0 0 56 56"><path d="M3 4v18l5-6h9z" fill="url(#ig)"/><path d="M16 18c6 4 12 4 16 0l12 6-6 8 4 16H18l4-16-8-8z" fill="url(#igd)"/><path d="M16 20c10 8 10 20 22 26" stroke="#ccc" stroke-width="1.8" fill="none"/><circle cx="16" cy="20" r="3.6" fill="#d8d8d8"/><circle cx="40" cy="46" r="3.6" fill="#d8d8d8"/></svg>
<svg style="left:472px;top:279px" width="56" height="56" viewBox="0 0 56 56"><path d="M6 12c6 4 12 4 16 0l12 6-6 8 4 16H10l4-16-8-8z" fill="url(#igd)"/><path d="M6 14c10 8 10 20 22 26" stroke="#ccc" stroke-width="1.8" fill="none"/><path d="M24 30l18-22 5 4-18 22z" fill="url(#ig)"/><circle cx="6" cy="14" r="3.6" fill="#d8d8d8"/><circle cx="30" cy="40" r="3.6" fill="#d8d8d8"/><path d="M52 42v10H42z" fill="#5c5c5c"/></svg>
<div class="a" style="left:545px;top:285px;width:2px;height:44px;background:#151515;"></div>
<div class="a" style="left:550px;top:285px;width:2px;height:44px;background:#151515;"></div>
<svg style="left:567px;top:279px" width="56" height="56" viewBox="0 0 56 56"><path d="M3 4v18l5-6h9z" fill="url(#ig)"/><rect x="18" y="22" width="4" height="4" fill="#333"/><rect x="18" y="26" width="4" height="4" fill="#bbb"/><rect x="18" y="30" width="4" height="4" fill="#333"/><rect x="18" y="34" width="4" height="4" fill="#bbb"/><rect x="18" y="38" width="4" height="4" fill="#333"/><rect x="22" y="22" width="4" height="4" fill="#bbb"/><rect x="22" y="26" width="4" height="4" fill="#333"/><rect x="22" y="30" width="4" height="4" fill="#bbb"/><rect x="22" y="34" width="4" height="4" fill="#333"/><rect x="22" y="38" width="4" height="4" fill="#bbb"/><rect x="26" y="22" width="4" height="4" fill="#333"/><rect x="26" y="26" width="4" height="4" fill="#bbb"/><rect x="26" y="30" width="4" height="4" fill="#333"/><rect x="26" y="34" width="4" height="4" fill="#bbb"/><rect x="26" y="38" width="4" height="4" fill="#333"/><rect x="30" y="22" width="4" height="4" fill="#bbb"/><rect x="30" y="26" width="4" height="4" fill="#333"/><rect x="30" y="30" width="4" height="4" fill="#bbb"/><rect x="30" y="34" width="4" height="4" fill="#333"/><rect x="30" y="38" width="4" height="4" fill="#bbb"/><rect x="34" y="16" width="12" height="30" rx="6" fill="url(#igc)"/><path d="M20 46c8 4 18 4 26 0" stroke="#ccc" stroke-width="2" fill="none"/></svg>
<svg style="left:641px;top:279px" width="56" height="56" viewBox="0 0 56 56"><path d="M3 4v18l5-6h9z" fill="url(#ig)"/><path d="M4 20l10-7h6c1 3 3 4 6 4s5-1 6-4h6l10 7-5 8-5-3v22H14V25l-5 3z" fill="url(#ig)" transform="translate(6,8) scale(.8)"/><rect x="19" y="30" width="5" height="5" fill="#ddd"/><rect x="19" y="35" width="5" height="5" fill="#444"/><rect x="19" y="40" width="5" height="5" fill="#ddd"/><rect x="24" y="30" width="5" height="5" fill="#444"/><rect x="24" y="35" width="5" height="5" fill="#ddd"/><rect x="24" y="40" width="5" height="5" fill="#444"/><rect x="29" y="30" width="5" height="5" fill="#ddd"/><rect x="29" y="35" width="5" height="5" fill="#444"/><rect x="29" y="40" width="5" height="5" fill="#ddd"/></svg>
<svg style="left:716px;top:279px" width="56" height="56" viewBox="0 0 56 56"><path d="M4 20l10-7h6c1 3 3 4 6 4s5-1 6-4h6l10 7-5 8-5-3v22H14V25l-5 3z" fill="url(#ig)"/><rect x="20" y="28" width="5" height="5" fill="#ddd"/><rect x="20" y="33" width="5" height="5" fill="#444"/><rect x="20" y="38" width="5" height="5" fill="#ddd"/><rect x="25" y="28" width="5" height="5" fill="#444"/><rect x="25" y="33" width="5" height="5" fill="#ddd"/><rect x="25" y="38" width="5" height="5" fill="#444"/><rect x="30" y="28" width="5" height="5" fill="#ddd"/><rect x="30" y="33" width="5" height="5" fill="#444"/><rect x="30" y="38" width="5" height="5" fill="#ddd"/></svg>
<div class="a" style="left:794px;top:285px;width:2px;height:44px;background:#151515;"></div>
<div class="a" style="left:799px;top:285px;width:2px;height:44px;background:#151515;"></div>
<svg style="left:815px;top:279px" width="56" height="56" viewBox="0 0 56 56"><path d="M3 4v18l5-6h9z" fill="url(#ig)"/><path d="M8 34h40" stroke="#555" stroke-width="2"/><circle cx="30" cy="34" r="11" fill="url(#igc)"/><rect x="25" y="29" width="4" height="4" fill="#555"/><rect x="25" y="35" width="4" height="4" fill="#555"/><rect x="31" y="29" width="4" height="4" fill="#555"/><rect x="31" y="35" width="4" height="4" fill="#555"/></svg>
<svg style="left:898px;top:279px" width="52" height="56" viewBox="0 0 52 56"><circle cx="20" cy="28" r="16" fill="url(#igc)"/><rect x="13" y="21" width="5" height="5" fill="#555"/><rect x="13" y="31" width="5" height="5" fill="#555"/><rect x="23" y="21" width="5" height="5" fill="#555"/><rect x="23" y="31" width="5" height="5" fill="#555"/><path d="M48 38v10H38z" fill="#5c5c5c"/></svg>
<svg style="left:966px;top:279px" width="52" height="56" viewBox="0 0 52 56"><rect x="2" y="20" width="12" height="12" fill="url(#igd)"/><path d="M4 20v-6a4 4 0 0 1 8 0v6" stroke="#666" stroke-width="2.5" fill="none"/><rect x="30" y="14" width="14" height="40" rx="7" fill="none" stroke="#666" stroke-width="2"/><circle cx="34" cy="34" r="11" fill="url(#igc)"/></svg>
<div class="a" style="left:1042px;top:285px;width:2px;height:44px;background:#151515;"></div>
<div class="a" style="left:1047px;top:285px;width:2px;height:44px;background:#151515;"></div>
<svg style="left:1070px;top:279px" width="44" height="56" viewBox="0 0 44 56"><rect x="2" y="12" width="40" height="40" fill="url(#igd)"/><circle cx="22" cy="8" r="5" fill="none" stroke="#aaa" stroke-width="3"/><path d="M22 14v36" stroke="#bbb" stroke-width="4" stroke-dasharray="3 3"/></svg>
<div class="a" style="left:1142px;top:285px;width:2px;height:44px;background:#151515;"></div>
<div class="a" style="left:1147px;top:285px;width:2px;height:44px;background:#151515;"></div>
<svg style="left:1195.6px;top:300px" width="16" height="22" viewBox="0 0 16 22"><path d="M1.5 1c3 3 4.5 6 4.5 10s-1.5 7-4.5 10M8.5 1c3 3 4.5 6 4.5 10s-1.5 7-4.5 10" stroke="#181818" stroke-width="2.6" fill="none"/></svg>
<div class="a" style="left:1231px;top:285px;width:2px;height:44px;background:#151515;"></div>
<div class="a" style="left:1236px;top:285px;width:2px;height:44px;background:#151515;"></div>
<svg style="left:1270px;top:300px" width="16" height="22" viewBox="0 0 16 22"><path d="M1.5 1c3 3 4.5 6 4.5 10s-1.5 7-4.5 10M8.5 1c3 3 4.5 6 4.5 10s-1.5 7-4.5 10" stroke="#181818" stroke-width="2.6" fill="none"/></svg>
<div class="a" style="left:1316px;top:221px;width:2px;height:44px;background:#151515;"></div>
<div class="a" style="left:1321px;top:221px;width:2px;height:44px;background:#151515;"></div>
<div class="a" style="left:1335px;top:215px;width:62px;height:54px;background:#1c1c1c;box-shadow:inset 0 0 0 1px #303030"></div>
<svg style="left:1335px;top:214px" width="62" height="54" viewBox="0 0 62 54"><path d="M3 4v18l5-6h9z" fill="none" stroke="#7a7a7a" stroke-width="1.6"/><path d="M20 46L52 18v28z" fill="url(#org2)"/></svg>
<svg style="left:1412px;top:217px" width="56" height="56" viewBox="0 0 56 56"><path d="M3 4v18l5-6h9z" fill="url(#ig)"/><path d="M12 44h24V14z" stroke="#555" stroke-width="1.6" fill="none"/><circle cx="12" cy="44" r="3.6" fill="#d8d8d8"/><circle cx="36" cy="44" r="3.6" fill="#d8d8d8"/><circle cx="36" cy="14" r="3.6" fill="#d8d8d8"/><path d="M52 42v10H42z" fill="#5c5c5c"/></svg>
<svg style="left:1486px;top:217px" width="56" height="56" viewBox="0 0 56 56"><path d="M3 4v18l5-6h9z" fill="url(#ig)"/><path d="M22 22h30v30H22z" fill="url(#igd)"/><path d="M22 12l30 8v6H22z" fill="#777"/><path d="M18 26l6-14" stroke="#bbb" stroke-width="2"/><circle cx="18" cy="26" r="3.6" fill="#d8d8d8"/><circle cx="24" cy="12" r="3.6" fill="#d8d8d8"/></svg>
<svg style="left:1565px;top:217px" width="56" height="56" viewBox="0 0 56 56"><path d="M2 6h22l10 8 14 4v22H2z" fill="url(#ig)"/><path d="M50 40v10H40z" fill="#5c5c5c"/></svg>
<svg style="left:1638px;top:217px" width="56" height="56" viewBox="0 0 56 56"><rect x="2" y="4" width="44" height="36" fill="url(#ig)"/><path d="M8 10h12l6 8 12 4v12H8z" stroke="#ccc" stroke-width="2.4" fill="none"/><path d="M50 40v10H40z" fill="#5c5c5c"/></svg>
<svg style="left:1710px;top:217px" width="56" height="56" viewBox="0 0 56 56"><rect x="2" y="6" width="28" height="36" fill="#3a3a3a"/><path d="M8 20h14v10l-7 8-7-8z" stroke="#ddd" stroke-width="2" fill="none"/><path d="M24 2h24v16l-12 12-12-12z" fill="url(#igc)"/></svg>
<div class="a" style="left:1785px;top:221px;width:2px;height:44px;background:#151515;"></div>
<div class="a" style="left:1790px;top:221px;width:2px;height:44px;background:#151515;"></div>
<svg style="left:1812px;top:217px" width="56" height="56" viewBox="0 0 56 56"><path d="M4 6l10 6v28L4 36zM14 12l10-6v30l-10 4zM24 6l10 6v28l-10-4zM34 12l10-6v30l-10 4z" fill="url(#igc)" stroke="#333" stroke-width=".6"/><path d="M52 42v10H42z" fill="#5c5c5c"/></svg>
<div class="a" style="left:1885px;top:221px;width:2px;height:44px;background:#151515;"></div>
<div class="a" style="left:1890px;top:221px;width:2px;height:44px;background:#151515;"></div>
<svg style="left:1908px;top:217px" width="56" height="56" viewBox="0 0 56 56"><path d="M3 4v18l5-6h9z" fill="url(#ig)"/><path d="M20 18h28l-6 26H14z" fill="#2c2c2c" stroke="#aaa" stroke-width="1.5"/><path d="M18 31h28M33 18l-4 26" stroke="#aaa" stroke-width="1.5"/><circle cx="20" cy="18" r="3.6" fill="#d8d8d8"/><circle cx="34" cy="18" r="3.6" fill="#d8d8d8"/><circle cx="48" cy="18" r="3.6" fill="#d8d8d8"/><circle cx="14" cy="44" r="3.6" fill="#d8d8d8"/><circle cx="29" cy="44" r="3.6" fill="#d8d8d8"/><circle cx="42" cy="44" r="3.6" fill="#d8d8d8"/></svg>
<svg style="left:1982px;top:217px" width="60" height="56" viewBox="0 0 60 56"><path d="M12 4h42l-12 42H2z" fill="#2c2c2c" stroke="#aaa" stroke-width="1.5"/><path d="M7 25h42M33 4l-12 42" stroke="#aaa" stroke-width="1.5"/><circle cx="12" cy="4" r="3.6" fill="#d8d8d8"/><circle cx="33" cy="4" r="3.6" fill="#d8d8d8"/><circle cx="54" cy="4" r="3.6" fill="#d8d8d8"/><circle cx="2" cy="46" r="3.6" fill="#d8d8d8"/><circle cx="21" cy="46" r="3.6" fill="#d8d8d8"/><circle cx="42" cy="46" r="3.6" fill="#d8d8d8"/><circle cx="7" cy="25" r="3.6" fill="#d8d8d8"/><circle cx="49" cy="25" r="3.6" fill="#d8d8d8"/></svg>
<div class="a" style="left:1316px;top:285px;width:2px;height:44px;background:#151515;"></div>
<div class="a" style="left:1321px;top:285px;width:2px;height:44px;background:#151515;"></div>
<svg style="left:1336px;top:279px" width="56" height="56" viewBox="0 0 56 56"><path d="M3 4v18l5-6h9z" fill="url(#ig)"/><path d="M15 22h22c3 0 5 2 5 5v23H16v-6h16V32H22v5h-4v-5h-3z" fill="url(#ig)"/><path d="M34 16h4v6h-4z" fill="#8a8a8a"/></svg>
<svg style="left:1414px;top:279px" width="56" height="56" viewBox="0 0 56 56"><path d="M14 10h22c3 0 5 2 5 5v23H31V20H21v5h-4v-5h-3z" fill="url(#igd)"/><path d="M33 4h4v6h-4z" fill="#666"/><path d="M6 42h26" stroke="#bbb" stroke-width="2"/><circle cx="6" cy="42" r="3.6" fill="#d8d8d8"/><circle cx="32" cy="42" r="3.6" fill="#d8d8d8"/><path d="M52 42v10H42z" fill="#5c5c5c"/></svg>
<svg style="left:1488px;top:279px" width="56" height="56" viewBox="0 0 56 56"><path d="M14 10h22c3 0 5 2 5 5v23H31V20H21v5h-4v-5h-3z" fill="url(#igd)"/><path d="M33 4h4v6h-4z" fill="#666"/><path d="M4 44c6-8 10 4 16-2s10 4 16-2" stroke="#bbb" stroke-width="2" fill="none"/><circle cx="20" cy="42" r="3.6" fill="#d8d8d8"/><path d="M52 42v10H42z" fill="#5c5c5c"/></svg>
<svg style="left:1560px;top:279px" width="56" height="56" viewBox="0 0 56 56"><circle cx="10" cy="10" r="7" fill="none" stroke="#777" stroke-width="2"/><path d="M14 16l6 8" stroke="#777" stroke-width="2.5"/><path d="M15 22h22c3 0 5 2 5 5v23H16v-6h16V32H22v5h-4v-5h-3z" fill="url(#ig)"/><path d="M34 16h4v6h-4z" fill="#8a8a8a"/></svg>
<div class="a" style="left:1637px;top:285px;width:2px;height:44px;background:#151515;"></div>
<div class="a" style="left:1642px;top:285px;width:2px;height:44px;background:#151515;"></div>
<svg style="left:1662px;top:279px" width="52" height="56" viewBox="0 0 52 56"><path d="M6 40c2-14 12-22 30-22h8l2 22z" fill="url(#ig)"/><path d="M22 20h18" stroke="#333" stroke-width="2"/><rect x="38" y="28" width="4" height="4" fill="#222"/><path d="M4 44h42v8H4z" fill="url(#igd)"/></svg>
<div class="a" style="left:1738px;top:285px;width:2px;height:44px;background:#151515;"></div>
<div class="a" style="left:1743px;top:285px;width:2px;height:44px;background:#151515;"></div>
<svg style="left:1758px;top:279px" width="56" height="56" viewBox="0 0 56 56"><path d="M3 4v18l5-6h9z" fill="url(#ig)"/><path d="M4 20l10-7h6c1 3 3 4 6 4s5-1 6-4h6l10 7-5 8-5-3v22H14V25l-5 3z" fill="url(#ig)" transform="translate(4,8) scale(.9)"/><path d="M26 17c2 4 10 4 12 0" stroke="#ccc" stroke-width="2.5" fill="none"/></svg>
<div class="a" style="left:1838px;top:285px;width:2px;height:44px;background:#151515;"></div>
<div class="a" style="left:1843px;top:285px;width:2px;height:44px;background:#151515;"></div>
<svg style="left:1859px;top:279px" width="56" height="56" viewBox="0 0 56 56"><path d="M3 4v18l5-6h9z" fill="url(#ig)"/><rect x="18" y="22" width="4" height="4" fill="#333"/><rect x="18" y="26" width="4" height="4" fill="#bbb"/><rect x="18" y="30" width="4" height="4" fill="#333"/><rect x="18" y="34" width="4" height="4" fill="#bbb"/><rect x="18" y="38" width="4" height="4" fill="#333"/><rect x="22" y="22" width="4" height="4" fill="#bbb"/><rect x="22" y="26" width="4" height="4" fill="#333"/><rect x="22" y="30" width="4" height="4" fill="#bbb"/><rect x="22" y="34" width="4" height="4" fill="#333"/><rect x="22" y="38" width="4" height="4" fill="#bbb"/><rect x="26" y="22" width="4" height="4" fill="#333"/><rect x="26" y="26" width="4" height="4" fill="#bbb"/><rect x="26" y="30" width="4" height="4" fill="#333"/><rect x="26" y="34" width="4" height="4" fill="#bbb"/><rect x="26" y="38" width="4" height="4" fill="#333"/><rect x="30" y="22" width="4" height="4" fill="#bbb"/><rect x="30" y="26" width="4" height="4" fill="#333"/><rect x="30" y="30" width="4" height="4" fill="#bbb"/><rect x="30" y="34" width="4" height="4" fill="#333"/><rect x="30" y="38" width="4" height="4" fill="#bbb"/><rect x="34" y="16" width="12" height="30" rx="6" fill="url(#igc)"/><path d="M20 46c8 4 18 4 26 0" stroke="#ccc" stroke-width="2" fill="none"/></svg>
<svg style="left:1934px;top:279px" width="56" height="56" viewBox="0 0 56 56"><path d="M3 4v18l5-6h9z" fill="url(#ig)"/><path d="M4 20l10-7h6c1 3 3 4 6 4s5-1 6-4h6l10 7-5 8-5-3v22H14V25l-5 3z" fill="url(#ig)" transform="translate(6,10) scale(.8)"/><rect x="19" y="32" width="5" height="5" fill="#ddd"/><rect x="19" y="37" width="5" height="5" fill="#444"/><rect x="19" y="42" width="5" height="5" fill="#ddd"/><rect x="24" y="32" width="5" height="5" fill="#444"/><rect x="24" y="37" width="5" height="5" fill="#ddd"/><rect x="24" y="42" width="5" height="5" fill="#444"/><rect x="29" y="32" width="5" height="5" fill="#ddd"/><rect x="29" y="37" width="5" height="5" fill="#444"/><rect x="29" y="42" width="5" height="5" fill="#ddd"/></svg>
<svg style="left:2008px;top:279px" width="56" height="56" viewBox="0 0 56 56"><path d="M4 20l10-7h6c1 3 3 4 6 4s5-1 6-4h6l10 7-5 8-5-3v22H14V25l-5 3z" fill="url(#ig)"/><rect x="20" y="28" width="5" height="5" fill="#ddd"/><rect x="20" y="33" width="5" height="5" fill="#444"/><rect x="20" y="38" width="5" height="5" fill="#ddd"/><rect x="25" y="28" width="5" height="5" fill="#444"/><rect x="25" y="33" width="5" height="5" fill="#ddd"/><rect x="25" y="38" width="5" height="5" fill="#444"/><rect x="30" y="28" width="5" height="5" fill="#ddd"/><rect x="30" y="33" width="5" height="5" fill="#444"/><rect x="30" y="38" width="5" height="5" fill="#ddd"/></svg>
<div class="a" style="left:2086px;top:285px;width:2px;height:44px;background:#151515;"></div>
<div class="a" style="left:2091px;top:285px;width:2px;height:44px;background:#151515;"></div>
<svg style="left:2106px;top:279px" width="56" height="56" viewBox="0 0 56 56"><path d="M3 4v18l5-6h9z" fill="url(#ig)"/><path d="M18 48L48 14" stroke="#ccc" stroke-width="4.5" stroke-dasharray="1 8" stroke-linecap="round"/></svg>
<svg style="left:2184px;top:285px" width="58" height="56" viewBox="0 0 58 56"><path d="M6 10h40" stroke="#ccc" stroke-width="4.5" stroke-dasharray="4 8" stroke-linecap="round"/><path d="M4 27h44" stroke="#999" stroke-width="2"/><circle cx="4" cy="27" r="3.6" fill="#d8d8d8"/><circle cx="48" cy="27" r="3.6" fill="#d8d8d8"/><path d="M56 38v10H46z" fill="#5c5c5c"/></svg>
</body></html>
